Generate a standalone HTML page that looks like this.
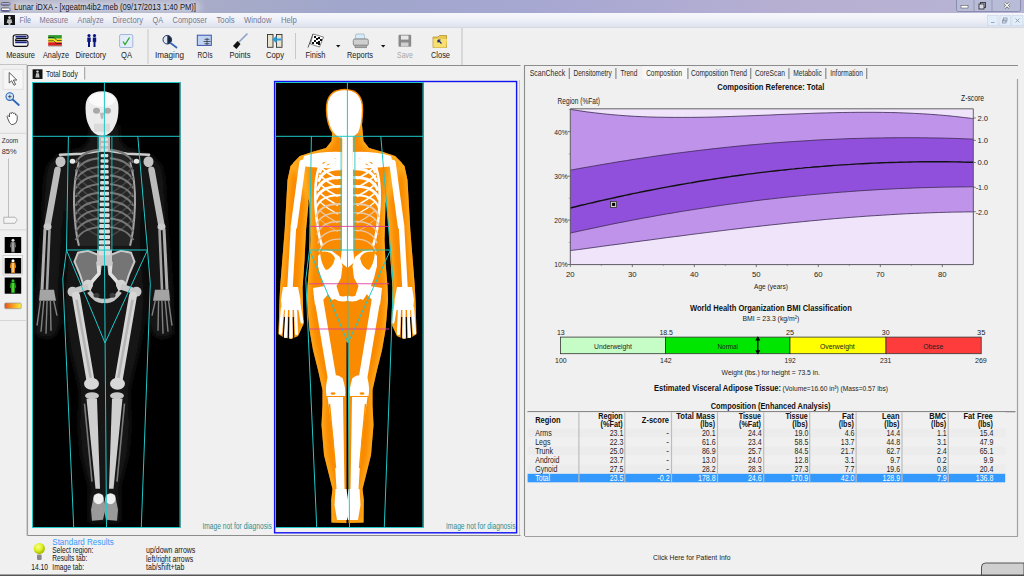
<!DOCTYPE html>
<html><head><meta charset="utf-8">
<style>
html,body{margin:0;padding:0;width:1024px;height:576px;overflow:hidden;background:#f0f0f0}
svg{display:block}
text{font-family:"Liberation Sans",sans-serif}
</style></head><body>
<svg width="1024" height="576" viewBox="0 0 1024 576">
<defs>
<linearGradient id="gTitle" x1="0" y1="0" x2="1" y2="0">
<stop offset="0" stop-color="#b0b2c4"/><stop offset="0.2" stop-color="#a8acc8"/><stop offset="0.35" stop-color="#a0a6cc"/><stop offset="0.55" stop-color="#a8a8d2"/><stop offset="0.8" stop-color="#b8b0d2"/><stop offset="1" stop-color="#b6b4d4"/>
</linearGradient>
<linearGradient id="gMenu" x1="0" y1="0" x2="0" y2="1">
<stop offset="0" stop-color="#f6f7fb"/><stop offset="0.5" stop-color="#eef0f8"/><stop offset="1" stop-color="#dde2ee"/>
</linearGradient>
</defs>
<rect x="0" y="0" width="1024" height="576" fill="#f0f0f0"/>
<rect x="0" y="0" width="1024" height="13" fill="url(#gTitle)"/>
<rect x="0" y="13" width="1024" height="14" fill="url(#gMenu)"/>
<rect x="0" y="27" width="1024" height="1" fill="#d6d9e2"/>
<rect x="4" y="15" width="11" height="10" fill="#111"/><circle cx="9.5" cy="17.6" r="1.3" fill="#ddd"/><path d="M7.5 19.3 H11.5 L12.3 23 L10.8 23 L10.3 25 H8.7 L8.2 23 L6.7 23 Z" fill="#bbb"/>
<rect x="1.3" y="2.5" width="8.7" height="2.8" rx="1.2" fill="#fff" stroke="#333" stroke-width="0.7"/><rect x="2" y="3.6" width="7.3" height="1" fill="#3a3a9a"/>
<rect x="1.3" y="8" width="8.7" height="3.3" rx="1.2" fill="#fff" stroke="#333" stroke-width="0.7"/><rect x="2" y="10.2" width="7.3" height="1" fill="#3a3a9a"/>
<rect x="956.5" y="-2" width="64" height="13.5" rx="2" fill="#b9bcd6" stroke="#7d82a6" stroke-width="0.8"/>
<line x1="974" y1="0" x2="974" y2="11" stroke="#8a8fb0" stroke-width="0.8"/>
<line x1="992" y1="0" x2="992" y2="11" stroke="#8a8fb0" stroke-width="0.8"/>
<rect x="961" y="5.5" width="7" height="2.5" fill="#fff" stroke="#444" stroke-width="0.5"/>
<rect x="980.5" y="2.5" width="5" height="5" fill="none" stroke="#333" stroke-width="0.9"/><rect x="979" y="4" width="5" height="5" fill="#d8dae8" stroke="#333" stroke-width="0.9"/>
<path d="M1004.5 3 L1009.5 7.8 M1009.5 3 L1004.5 7.8" stroke="#555" stroke-width="2.4"/><path d="M1004.5 3 L1009.5 7.8 M1009.5 3 L1004.5 7.8" stroke="#fff" stroke-width="1.2"/>
<g fill="#e2eefa" stroke="#c8d2e2" stroke-width="0.6">
<rect x="987.3" y="15.2" width="10.7" height="10.5"/><rect x="999.9" y="15.2" width="10.5" height="10.5"/><rect x="1012" y="15.2" width="10.9" height="10.5"/>
</g>
<g stroke="#8890a8" stroke-width="0.8" fill="none">
<line x1="991" y1="22.5" x2="994.5" y2="22.5"/><rect x="1003.5" y="18" width="3.5" height="3"/><rect x="1002.5" y="20" width="3.5" height="3"/><path d="M1015.5 18.5 L1019.5 22.5 M1019.5 18.5 L1015.5 22.5"/>
</g>
<rect x="0" y="64" width="27" height="1" fill="#c4c4c4"/>
<rect x="147.5" y="29" width="1" height="35" fill="#c8c8c8"/>
<rect x="295" y="33" width="1" height="26" fill="#c8c8c8"/>
<rect x="461.5" y="28" width="1" height="37" fill="#c0c0c0"/>

<defs><filter id="glow" x="-20%" y="-100%" width="140%" height="300%"><feGaussianBlur stdDeviation="3"/></filter></defs><rect x="12" y="2" width="188" height="10" fill="#e8e8f0" opacity="0.55" filter="url(#glow)"/>
<text x="14.0" y="9.9" font-size="8.6" fill="#151520" textLength="182.0" lengthAdjust="spacingAndGlyphs">Lunar iDXA - [xgeatm4ib2.meb (09/17/2013 1:40 PM)]</text>
<text x="19.5" y="23.0" font-size="8.2" fill="#767890" textLength="11.5" lengthAdjust="spacingAndGlyphs">File</text>
<text x="39.5" y="23.0" font-size="8.2" fill="#767890" textLength="28.7" lengthAdjust="spacingAndGlyphs">Measure</text>
<text x="77.5" y="23.0" font-size="8.2" fill="#767890" textLength="26.2" lengthAdjust="spacingAndGlyphs">Analyze</text>
<text x="112.5" y="23.0" font-size="8.2" fill="#767890" textLength="30.5" lengthAdjust="spacingAndGlyphs">Directory</text>
<text x="152.5" y="23.0" font-size="8.2" fill="#767890" textLength="10.5" lengthAdjust="spacingAndGlyphs">QA</text>
<text x="172.5" y="23.0" font-size="8.2" fill="#767890" textLength="34.5" lengthAdjust="spacingAndGlyphs">Composer</text>
<text x="216.5" y="23.0" font-size="8.2" fill="#767890" textLength="18.0" lengthAdjust="spacingAndGlyphs">Tools</text>
<text x="244.0" y="23.0" font-size="8.2" fill="#767890" textLength="27.5" lengthAdjust="spacingAndGlyphs">Window</text>
<text x="281.0" y="23.0" font-size="8.2" fill="#767890" textLength="15.8" lengthAdjust="spacingAndGlyphs">Help</text>
<text x="6.2" y="57.5" font-size="8.6" fill="#222" textLength="28.8" lengthAdjust="spacingAndGlyphs">Measure</text>
<text x="43.0" y="57.5" font-size="8.6" fill="#222" textLength="26.0" lengthAdjust="spacingAndGlyphs">Analyze</text>
<text x="75.5" y="57.5" font-size="8.6" fill="#222" textLength="30.5" lengthAdjust="spacingAndGlyphs">Directory</text>
<text x="121.0" y="57.5" font-size="8.6" fill="#222" textLength="11.0" lengthAdjust="spacingAndGlyphs">QA</text>
<text x="155.0" y="57.5" font-size="8.6" fill="#222" textLength="29.0" lengthAdjust="spacingAndGlyphs">Imaging</text>
<text x="197.5" y="57.5" font-size="8.6" fill="#222" textLength="15.0" lengthAdjust="spacingAndGlyphs">ROIs</text>
<text x="229.5" y="57.5" font-size="8.6" fill="#222" textLength="21.0" lengthAdjust="spacingAndGlyphs">Points</text>
<text x="266.0" y="57.5" font-size="8.6" fill="#222" textLength="18.0" lengthAdjust="spacingAndGlyphs">Copy</text>
<text x="305.5" y="57.5" font-size="8.6" fill="#222" textLength="20.0" lengthAdjust="spacingAndGlyphs">Finish</text>
<text x="347.0" y="57.5" font-size="8.6" fill="#222" textLength="26.0" lengthAdjust="spacingAndGlyphs">Reports</text>
<text x="431.0" y="57.5" font-size="8.6" fill="#222" textLength="19.0" lengthAdjust="spacingAndGlyphs">Close</text>
<text x="397.0" y="57.5" font-size="8.6" fill="#a8a8a8" textLength="16.0" lengthAdjust="spacingAndGlyphs">Save</text>
<path d="M524.5 536 V65.5 H1018" stroke="#8c8c8c" stroke-width="1.1" fill="none"/>
<path d="M1017.5 79 V536" stroke="#a0a0a0" stroke-width="1.2" fill="none"/>
<path d="M525 536.5 H1018" stroke="#a0a0a0" stroke-width="1" fill="none"/>
<rect x="642.5" y="66.5" width="45" height="12.5" fill="#f7f7f7"/>
<rect x="568.7" y="68" width="1.2" height="11" fill="#8a8a8a"/>
<rect x="615.3" y="68" width="1.2" height="11" fill="#8a8a8a"/>
<rect x="687.3" y="68" width="1.2" height="11" fill="#8a8a8a"/>
<rect x="750.1" y="68" width="1.2" height="11" fill="#8a8a8a"/>
<rect x="788.3" y="68" width="1.2" height="11" fill="#8a8a8a"/>
<rect x="825.2" y="68" width="1.2" height="11" fill="#8a8a8a"/>
<rect x="866.1" y="68" width="1.2" height="11" fill="#8a8a8a"/>
<text x="529.7" y="75.8" font-size="8.4" fill="#2a2a2a" textLength="35.6" lengthAdjust="spacingAndGlyphs">ScanCheck</text>
<text x="573.6" y="75.8" font-size="8.4" fill="#2a2a2a" textLength="38.1" lengthAdjust="spacingAndGlyphs">Densitometry</text>
<text x="620.5" y="75.8" font-size="8.4" fill="#2a2a2a" textLength="16.9" lengthAdjust="spacingAndGlyphs">Trend</text>
<text x="646.2" y="75.8" font-size="8.4" fill="#2a2a2a" textLength="35.8" lengthAdjust="spacingAndGlyphs">Composition</text>
<text x="690.9" y="75.8" font-size="8.4" fill="#2a2a2a" textLength="56.2" lengthAdjust="spacingAndGlyphs">Composition Trend</text>
<text x="755.0" y="75.8" font-size="8.4" fill="#2a2a2a" textLength="29.9" lengthAdjust="spacingAndGlyphs">CoreScan</text>
<text x="793.3" y="75.8" font-size="8.4" fill="#2a2a2a" textLength="28.5" lengthAdjust="spacingAndGlyphs">Metabolic</text>
<text x="830.2" y="75.8" font-size="8.4" fill="#2a2a2a" textLength="32.6" lengthAdjust="spacingAndGlyphs">Information</text>
<text x="717.2" y="90.2" font-size="8.2" fill="#111" font-weight="bold" textLength="107.2" lengthAdjust="spacingAndGlyphs">Composition Reference: Total</text>
<text x="557.6" y="103.7" font-size="8.2" fill="#222" textLength="42.4" lengthAdjust="spacingAndGlyphs">Region (%Fat)</text>
<text x="961.0" y="101.3" font-size="8.2" fill="#222" textLength="23.0" lengthAdjust="spacingAndGlyphs">Z-score</text>
<rect x="570.3" y="108.8" width="403.0" height="155.8" fill="#efe4f9"/>
<path d="M570.3 109.3 C571.6 109.6 575.6 110.2 578.3 110.6 C581.0 111.0 583.6 111.4 586.3 111.8 C589.0 112.2 591.6 112.5 594.3 112.8 C597.0 113.1 599.6 113.4 602.3 113.7 C605.0 114.0 607.6 114.3 610.3 114.5 C613.0 114.8 615.6 115.0 618.3 115.2 C621.0 115.4 623.6 115.6 626.3 115.8 C629.0 116.0 631.6 116.1 634.3 116.3 C637.0 116.4 639.6 116.5 642.3 116.7 C645.0 116.8 647.6 116.9 650.3 117.0 C653.0 117.1 655.6 117.1 658.3 117.2 C661.0 117.3 663.6 117.3 666.3 117.3 C669.0 117.4 671.6 117.4 674.3 117.4 C677.0 117.4 679.6 117.4 682.3 117.4 C685.0 117.4 687.6 117.4 690.3 117.4 C693.0 117.4 695.6 117.3 698.3 117.3 C701.0 117.3 703.6 117.2 706.3 117.2 C709.0 117.1 711.6 117.0 714.3 117.0 C717.0 116.9 719.6 116.8 722.3 116.8 C725.0 116.7 727.6 116.6 730.3 116.5 C733.0 116.4 735.6 116.3 738.3 116.2 C741.0 116.1 743.6 116.0 746.3 115.9 C749.0 115.8 751.6 115.7 754.3 115.6 C757.0 115.5 759.6 115.4 762.3 115.3 C765.0 115.2 767.6 115.1 770.3 115.0 C773.0 114.9 775.6 114.7 778.3 114.6 C781.0 114.5 783.6 114.4 786.3 114.3 C789.0 114.2 791.6 114.1 794.3 114.0 C797.0 113.9 799.6 113.8 802.3 113.7 C805.0 113.6 807.6 113.5 810.3 113.4 C813.0 113.3 815.6 113.2 818.3 113.1 C821.0 113.1 823.6 113.0 826.3 112.9 C829.0 112.8 831.6 112.8 834.3 112.7 C837.0 112.6 839.6 112.6 842.3 112.5 C845.0 112.5 847.6 112.4 850.3 112.4 C853.0 112.4 855.6 112.3 858.3 112.3 C861.0 112.3 863.6 112.3 866.3 112.3 C869.0 112.3 871.6 112.3 874.3 112.3 C877.0 112.3 879.6 112.3 882.3 112.4 C885.0 112.4 887.6 112.5 890.3 112.5 C893.0 112.6 895.6 112.6 898.3 112.7 C901.0 112.8 903.6 112.9 906.3 113.0 C909.0 113.1 911.6 113.2 914.3 113.4 C917.0 113.5 919.6 113.6 922.3 113.8 C925.0 113.9 927.6 114.1 930.3 114.3 C933.0 114.5 935.6 114.7 938.3 114.9 C941.0 115.1 943.6 115.3 946.3 115.6 C949.0 115.8 951.6 116.1 954.3 116.4 C957.0 116.6 959.6 116.9 962.3 117.3 C965.0 117.6 968.5 118.0 970.3 118.2 C972.1 118.5 972.8 118.6 973.3 118.6 L973.3 264.6 L570.3 264.6 Z" fill="#bf93e9"/>
<path d="M570.3 170.2 C571.6 170.0 575.6 169.2 578.3 168.7 C581.0 168.3 583.6 167.8 586.3 167.3 C589.0 166.8 591.6 166.3 594.3 165.9 C597.0 165.4 599.6 165.0 602.3 164.5 C605.0 164.0 607.6 163.6 610.3 163.2 C613.0 162.7 615.6 162.3 618.3 161.8 C621.0 161.4 623.6 161.0 626.3 160.6 C629.0 160.1 631.6 159.7 634.3 159.3 C637.0 158.9 639.6 158.5 642.3 158.1 C645.0 157.7 647.6 157.3 650.3 156.9 C653.0 156.5 655.6 156.1 658.3 155.7 C661.0 155.4 663.6 155.0 666.3 154.6 C669.0 154.3 671.6 153.9 674.3 153.5 C677.0 153.2 679.6 152.8 682.3 152.5 C685.0 152.2 687.6 151.8 690.3 151.5 C693.0 151.1 695.6 150.8 698.3 150.5 C701.0 150.2 703.6 149.9 706.3 149.6 C709.0 149.2 711.6 148.9 714.3 148.6 C717.0 148.3 719.6 148.0 722.3 147.8 C725.0 147.5 727.6 147.2 730.3 146.9 C733.0 146.6 735.6 146.4 738.3 146.1 C741.0 145.9 743.6 145.6 746.3 145.3 C749.0 145.1 751.6 144.8 754.3 144.6 C757.0 144.4 759.6 144.1 762.3 143.9 C765.0 143.7 767.6 143.5 770.3 143.2 C773.0 143.0 775.6 142.8 778.3 142.6 C781.0 142.4 783.6 142.2 786.3 142.0 C789.0 141.8 791.6 141.7 794.3 141.5 C797.0 141.3 799.6 141.1 802.3 141.0 C805.0 140.8 807.6 140.6 810.3 140.5 C813.0 140.3 815.6 140.2 818.3 140.0 C821.0 139.9 823.6 139.8 826.3 139.6 C829.0 139.5 831.6 139.4 834.3 139.3 C837.0 139.1 839.6 139.0 842.3 138.9 C845.0 138.8 847.6 138.7 850.3 138.6 C853.0 138.6 855.6 138.5 858.3 138.4 C861.0 138.3 863.6 138.2 866.3 138.2 C869.0 138.1 871.6 138.1 874.3 138.0 C877.0 137.9 879.6 137.9 882.3 137.9 C885.0 137.8 887.6 137.8 890.3 137.8 C893.0 137.7 895.6 137.7 898.3 137.7 C901.0 137.7 903.6 137.7 906.3 137.7 C909.0 137.7 911.6 137.7 914.3 137.7 C917.0 137.7 919.6 137.7 922.3 137.8 C925.0 137.8 927.6 137.8 930.3 137.9 C933.0 137.9 935.6 138.0 938.3 138.0 C941.0 138.1 943.6 138.1 946.3 138.2 C949.0 138.3 951.6 138.3 954.3 138.4 C957.0 138.5 959.6 138.6 962.3 138.7 C965.0 138.8 968.5 138.9 970.3 139.0 C972.1 139.1 972.8 139.1 973.3 139.1 L973.3 264.6 L570.3 264.6 Z" fill="#9150db"/>
<path d="M570.3 233.1 C571.6 232.8 575.6 231.9 578.3 231.3 C581.0 230.7 583.6 230.1 586.3 229.6 C589.0 229.0 591.6 228.4 594.3 227.9 C597.0 227.3 599.6 226.7 602.3 226.2 C605.0 225.6 607.6 225.1 610.3 224.5 C613.0 224.0 615.6 223.5 618.3 222.9 C621.0 222.4 623.6 221.9 626.3 221.4 C629.0 220.9 631.6 220.3 634.3 219.8 C637.0 219.3 639.6 218.8 642.3 218.3 C645.0 217.8 647.6 217.4 650.3 216.9 C653.0 216.4 655.6 215.9 658.3 215.4 C661.0 215.0 663.6 214.5 666.3 214.0 C669.0 213.6 671.6 213.1 674.3 212.7 C677.0 212.2 679.6 211.8 682.3 211.3 C685.0 210.9 687.6 210.5 690.3 210.1 C693.0 209.6 695.6 209.2 698.3 208.8 C701.0 208.4 703.6 208.0 706.3 207.6 C709.0 207.2 711.6 206.8 714.3 206.4 C717.0 206.0 719.6 205.6 722.3 205.2 C725.0 204.8 727.6 204.5 730.3 204.1 C733.0 203.7 735.6 203.4 738.3 203.0 C741.0 202.6 743.6 202.3 746.3 202.0 C749.0 201.6 751.6 201.3 754.3 200.9 C757.0 200.6 759.6 200.3 762.3 199.9 C765.0 199.6 767.6 199.3 770.3 199.0 C773.0 198.7 775.6 198.4 778.3 198.1 C781.0 197.8 783.6 197.5 786.3 197.2 C789.0 196.9 791.6 196.6 794.3 196.4 C797.0 196.1 799.6 195.8 802.3 195.6 C805.0 195.3 807.6 195.0 810.3 194.8 C813.0 194.5 815.6 194.3 818.3 194.1 C821.0 193.8 823.6 193.6 826.3 193.4 C829.0 193.1 831.6 192.9 834.3 192.7 C837.0 192.5 839.6 192.3 842.3 192.1 C845.0 191.9 847.6 191.7 850.3 191.5 C853.0 191.3 855.6 191.1 858.3 190.9 C861.0 190.7 863.6 190.5 866.3 190.4 C869.0 190.2 871.6 190.0 874.3 189.9 C877.0 189.7 879.6 189.6 882.3 189.4 C885.0 189.3 887.6 189.2 890.3 189.0 C893.0 188.9 895.6 188.8 898.3 188.6 C901.0 188.5 903.6 188.4 906.3 188.3 C909.0 188.2 911.6 188.1 914.3 188.0 C917.0 187.9 919.6 187.8 922.3 187.7 C925.0 187.6 927.6 187.6 930.3 187.5 C933.0 187.4 935.6 187.3 938.3 187.3 C941.0 187.2 943.6 187.2 946.3 187.1 C949.0 187.1 951.6 187.0 954.3 187.0 C957.0 187.0 959.6 186.9 962.3 186.9 C965.0 186.9 968.5 186.9 970.3 186.8 C972.1 186.8 972.8 186.8 973.3 186.8 L973.3 264.6 L570.3 264.6 Z" fill="#bf93e9"/>
<path d="M570.3 250.6 C571.6 250.4 575.6 249.9 578.3 249.6 C581.0 249.2 583.6 248.8 586.3 248.5 C589.0 248.1 591.6 247.8 594.3 247.4 C597.0 247.0 599.6 246.7 602.3 246.3 C605.0 246.0 607.6 245.6 610.3 245.2 C613.0 244.9 615.6 244.5 618.3 244.2 C621.0 243.8 623.6 243.4 626.3 243.1 C629.0 242.7 631.6 242.4 634.3 242.0 C637.0 241.7 639.6 241.3 642.3 240.9 C645.0 240.6 647.6 240.2 650.3 239.9 C653.0 239.5 655.6 239.2 658.3 238.8 C661.0 238.5 663.6 238.1 666.3 237.7 C669.0 237.4 671.6 237.0 674.3 236.7 C677.0 236.4 679.6 236.0 682.3 235.7 C685.0 235.3 687.6 235.0 690.3 234.6 C693.0 234.3 695.6 233.9 698.3 233.6 C701.0 233.3 703.6 232.9 706.3 232.6 C709.0 232.3 711.6 231.9 714.3 231.6 C717.0 231.3 719.6 230.9 722.3 230.6 C725.0 230.3 727.6 230.0 730.3 229.6 C733.0 229.3 735.6 229.0 738.3 228.7 C741.0 228.4 743.6 228.1 746.3 227.7 C749.0 227.4 751.6 227.1 754.3 226.8 C757.0 226.5 759.6 226.2 762.3 225.9 C765.0 225.6 767.6 225.3 770.3 225.0 C773.0 224.7 775.6 224.4 778.3 224.2 C781.0 223.9 783.6 223.6 786.3 223.3 C789.0 223.0 791.6 222.8 794.3 222.5 C797.0 222.2 799.6 222.0 802.3 221.7 C805.0 221.4 807.6 221.2 810.3 220.9 C813.0 220.7 815.6 220.4 818.3 220.2 C821.0 219.9 823.6 219.7 826.3 219.4 C829.0 219.2 831.6 219.0 834.3 218.7 C837.0 218.5 839.6 218.3 842.3 218.1 C845.0 217.8 847.6 217.6 850.3 217.4 C853.0 217.2 855.6 217.0 858.3 216.8 C861.0 216.6 863.6 216.4 866.3 216.2 C869.0 216.0 871.6 215.9 874.3 215.7 C877.0 215.5 879.6 215.3 882.3 215.2 C885.0 215.0 887.6 214.8 890.3 214.7 C893.0 214.5 895.6 214.4 898.3 214.2 C901.0 214.1 903.6 213.9 906.3 213.8 C909.0 213.7 911.6 213.5 914.3 213.4 C917.0 213.3 919.6 213.2 922.3 213.1 C925.0 213.0 927.6 212.9 930.3 212.8 C933.0 212.7 935.6 212.6 938.3 212.5 C941.0 212.4 943.6 212.4 946.3 212.3 C949.0 212.2 951.6 212.2 954.3 212.1 C957.0 212.1 959.6 212.0 962.3 212.0 C965.0 211.9 968.5 211.9 970.3 211.9 C972.1 211.9 972.8 211.9 973.3 211.9 L973.3 264.6 L570.3 264.6 Z" fill="#efe4f9"/>
<path d="M570.3 109.3 C571.6 109.6 575.6 110.2 578.3 110.6 C581.0 111.0 583.6 111.4 586.3 111.8 C589.0 112.2 591.6 112.5 594.3 112.8 C597.0 113.1 599.6 113.4 602.3 113.7 C605.0 114.0 607.6 114.3 610.3 114.5 C613.0 114.8 615.6 115.0 618.3 115.2 C621.0 115.4 623.6 115.6 626.3 115.8 C629.0 116.0 631.6 116.1 634.3 116.3 C637.0 116.4 639.6 116.5 642.3 116.7 C645.0 116.8 647.6 116.9 650.3 117.0 C653.0 117.1 655.6 117.1 658.3 117.2 C661.0 117.3 663.6 117.3 666.3 117.3 C669.0 117.4 671.6 117.4 674.3 117.4 C677.0 117.4 679.6 117.4 682.3 117.4 C685.0 117.4 687.6 117.4 690.3 117.4 C693.0 117.4 695.6 117.3 698.3 117.3 C701.0 117.3 703.6 117.2 706.3 117.2 C709.0 117.1 711.6 117.0 714.3 117.0 C717.0 116.9 719.6 116.8 722.3 116.8 C725.0 116.7 727.6 116.6 730.3 116.5 C733.0 116.4 735.6 116.3 738.3 116.2 C741.0 116.1 743.6 116.0 746.3 115.9 C749.0 115.8 751.6 115.7 754.3 115.6 C757.0 115.5 759.6 115.4 762.3 115.3 C765.0 115.2 767.6 115.1 770.3 115.0 C773.0 114.9 775.6 114.7 778.3 114.6 C781.0 114.5 783.6 114.4 786.3 114.3 C789.0 114.2 791.6 114.1 794.3 114.0 C797.0 113.9 799.6 113.8 802.3 113.7 C805.0 113.6 807.6 113.5 810.3 113.4 C813.0 113.3 815.6 113.2 818.3 113.1 C821.0 113.1 823.6 113.0 826.3 112.9 C829.0 112.8 831.6 112.8 834.3 112.7 C837.0 112.6 839.6 112.6 842.3 112.5 C845.0 112.5 847.6 112.4 850.3 112.4 C853.0 112.4 855.6 112.3 858.3 112.3 C861.0 112.3 863.6 112.3 866.3 112.3 C869.0 112.3 871.6 112.3 874.3 112.3 C877.0 112.3 879.6 112.3 882.3 112.4 C885.0 112.4 887.6 112.5 890.3 112.5 C893.0 112.6 895.6 112.6 898.3 112.7 C901.0 112.8 903.6 112.9 906.3 113.0 C909.0 113.1 911.6 113.2 914.3 113.4 C917.0 113.5 919.6 113.6 922.3 113.8 C925.0 113.9 927.6 114.1 930.3 114.3 C933.0 114.5 935.6 114.7 938.3 114.9 C941.0 115.1 943.6 115.3 946.3 115.6 C949.0 115.8 951.6 116.1 954.3 116.4 C957.0 116.6 959.6 116.9 962.3 117.3 C965.0 117.6 968.5 118.0 970.3 118.2 C972.1 118.5 972.8 118.6 973.3 118.6" fill="none" stroke="#3a2850" stroke-width="0.8"/>
<path d="M570.3 170.2 C571.6 170.0 575.6 169.2 578.3 168.7 C581.0 168.3 583.6 167.8 586.3 167.3 C589.0 166.8 591.6 166.3 594.3 165.9 C597.0 165.4 599.6 165.0 602.3 164.5 C605.0 164.0 607.6 163.6 610.3 163.2 C613.0 162.7 615.6 162.3 618.3 161.8 C621.0 161.4 623.6 161.0 626.3 160.6 C629.0 160.1 631.6 159.7 634.3 159.3 C637.0 158.9 639.6 158.5 642.3 158.1 C645.0 157.7 647.6 157.3 650.3 156.9 C653.0 156.5 655.6 156.1 658.3 155.7 C661.0 155.4 663.6 155.0 666.3 154.6 C669.0 154.3 671.6 153.9 674.3 153.5 C677.0 153.2 679.6 152.8 682.3 152.5 C685.0 152.2 687.6 151.8 690.3 151.5 C693.0 151.1 695.6 150.8 698.3 150.5 C701.0 150.2 703.6 149.9 706.3 149.6 C709.0 149.2 711.6 148.9 714.3 148.6 C717.0 148.3 719.6 148.0 722.3 147.8 C725.0 147.5 727.6 147.2 730.3 146.9 C733.0 146.6 735.6 146.4 738.3 146.1 C741.0 145.9 743.6 145.6 746.3 145.3 C749.0 145.1 751.6 144.8 754.3 144.6 C757.0 144.4 759.6 144.1 762.3 143.9 C765.0 143.7 767.6 143.5 770.3 143.2 C773.0 143.0 775.6 142.8 778.3 142.6 C781.0 142.4 783.6 142.2 786.3 142.0 C789.0 141.8 791.6 141.7 794.3 141.5 C797.0 141.3 799.6 141.1 802.3 141.0 C805.0 140.8 807.6 140.6 810.3 140.5 C813.0 140.3 815.6 140.2 818.3 140.0 C821.0 139.9 823.6 139.8 826.3 139.6 C829.0 139.5 831.6 139.4 834.3 139.3 C837.0 139.1 839.6 139.0 842.3 138.9 C845.0 138.8 847.6 138.7 850.3 138.6 C853.0 138.6 855.6 138.5 858.3 138.4 C861.0 138.3 863.6 138.2 866.3 138.2 C869.0 138.1 871.6 138.1 874.3 138.0 C877.0 137.9 879.6 137.9 882.3 137.9 C885.0 137.8 887.6 137.8 890.3 137.8 C893.0 137.7 895.6 137.7 898.3 137.7 C901.0 137.7 903.6 137.7 906.3 137.7 C909.0 137.7 911.6 137.7 914.3 137.7 C917.0 137.7 919.6 137.7 922.3 137.8 C925.0 137.8 927.6 137.8 930.3 137.9 C933.0 137.9 935.6 138.0 938.3 138.0 C941.0 138.1 943.6 138.1 946.3 138.2 C949.0 138.3 951.6 138.3 954.3 138.4 C957.0 138.5 959.6 138.6 962.3 138.7 C965.0 138.8 968.5 138.9 970.3 139.0 C972.1 139.1 972.8 139.1 973.3 139.1" fill="none" stroke="#3a2850" stroke-width="0.8"/>
<path d="M570.3 233.1 C571.6 232.8 575.6 231.9 578.3 231.3 C581.0 230.7 583.6 230.1 586.3 229.6 C589.0 229.0 591.6 228.4 594.3 227.9 C597.0 227.3 599.6 226.7 602.3 226.2 C605.0 225.6 607.6 225.1 610.3 224.5 C613.0 224.0 615.6 223.5 618.3 222.9 C621.0 222.4 623.6 221.9 626.3 221.4 C629.0 220.9 631.6 220.3 634.3 219.8 C637.0 219.3 639.6 218.8 642.3 218.3 C645.0 217.8 647.6 217.4 650.3 216.9 C653.0 216.4 655.6 215.9 658.3 215.4 C661.0 215.0 663.6 214.5 666.3 214.0 C669.0 213.6 671.6 213.1 674.3 212.7 C677.0 212.2 679.6 211.8 682.3 211.3 C685.0 210.9 687.6 210.5 690.3 210.1 C693.0 209.6 695.6 209.2 698.3 208.8 C701.0 208.4 703.6 208.0 706.3 207.6 C709.0 207.2 711.6 206.8 714.3 206.4 C717.0 206.0 719.6 205.6 722.3 205.2 C725.0 204.8 727.6 204.5 730.3 204.1 C733.0 203.7 735.6 203.4 738.3 203.0 C741.0 202.6 743.6 202.3 746.3 202.0 C749.0 201.6 751.6 201.3 754.3 200.9 C757.0 200.6 759.6 200.3 762.3 199.9 C765.0 199.6 767.6 199.3 770.3 199.0 C773.0 198.7 775.6 198.4 778.3 198.1 C781.0 197.8 783.6 197.5 786.3 197.2 C789.0 196.9 791.6 196.6 794.3 196.4 C797.0 196.1 799.6 195.8 802.3 195.6 C805.0 195.3 807.6 195.0 810.3 194.8 C813.0 194.5 815.6 194.3 818.3 194.1 C821.0 193.8 823.6 193.6 826.3 193.4 C829.0 193.1 831.6 192.9 834.3 192.7 C837.0 192.5 839.6 192.3 842.3 192.1 C845.0 191.9 847.6 191.7 850.3 191.5 C853.0 191.3 855.6 191.1 858.3 190.9 C861.0 190.7 863.6 190.5 866.3 190.4 C869.0 190.2 871.6 190.0 874.3 189.9 C877.0 189.7 879.6 189.6 882.3 189.4 C885.0 189.3 887.6 189.2 890.3 189.0 C893.0 188.9 895.6 188.8 898.3 188.6 C901.0 188.5 903.6 188.4 906.3 188.3 C909.0 188.2 911.6 188.1 914.3 188.0 C917.0 187.9 919.6 187.8 922.3 187.7 C925.0 187.6 927.6 187.6 930.3 187.5 C933.0 187.4 935.6 187.3 938.3 187.3 C941.0 187.2 943.6 187.2 946.3 187.1 C949.0 187.1 951.6 187.0 954.3 187.0 C957.0 187.0 959.6 186.9 962.3 186.9 C965.0 186.9 968.5 186.9 970.3 186.8 C972.1 186.8 972.8 186.8 973.3 186.8" fill="none" stroke="#3a2850" stroke-width="0.8"/>
<path d="M570.3 250.6 C571.6 250.4 575.6 249.9 578.3 249.6 C581.0 249.2 583.6 248.8 586.3 248.5 C589.0 248.1 591.6 247.8 594.3 247.4 C597.0 247.0 599.6 246.7 602.3 246.3 C605.0 246.0 607.6 245.6 610.3 245.2 C613.0 244.9 615.6 244.5 618.3 244.2 C621.0 243.8 623.6 243.4 626.3 243.1 C629.0 242.7 631.6 242.4 634.3 242.0 C637.0 241.7 639.6 241.3 642.3 240.9 C645.0 240.6 647.6 240.2 650.3 239.9 C653.0 239.5 655.6 239.2 658.3 238.8 C661.0 238.5 663.6 238.1 666.3 237.7 C669.0 237.4 671.6 237.0 674.3 236.7 C677.0 236.4 679.6 236.0 682.3 235.7 C685.0 235.3 687.6 235.0 690.3 234.6 C693.0 234.3 695.6 233.9 698.3 233.6 C701.0 233.3 703.6 232.9 706.3 232.6 C709.0 232.3 711.6 231.9 714.3 231.6 C717.0 231.3 719.6 230.9 722.3 230.6 C725.0 230.3 727.6 230.0 730.3 229.6 C733.0 229.3 735.6 229.0 738.3 228.7 C741.0 228.4 743.6 228.1 746.3 227.7 C749.0 227.4 751.6 227.1 754.3 226.8 C757.0 226.5 759.6 226.2 762.3 225.9 C765.0 225.6 767.6 225.3 770.3 225.0 C773.0 224.7 775.6 224.4 778.3 224.2 C781.0 223.9 783.6 223.6 786.3 223.3 C789.0 223.0 791.6 222.8 794.3 222.5 C797.0 222.2 799.6 222.0 802.3 221.7 C805.0 221.4 807.6 221.2 810.3 220.9 C813.0 220.7 815.6 220.4 818.3 220.2 C821.0 219.9 823.6 219.7 826.3 219.4 C829.0 219.2 831.6 219.0 834.3 218.7 C837.0 218.5 839.6 218.3 842.3 218.1 C845.0 217.8 847.6 217.6 850.3 217.4 C853.0 217.2 855.6 217.0 858.3 216.8 C861.0 216.6 863.6 216.4 866.3 216.2 C869.0 216.0 871.6 215.9 874.3 215.7 C877.0 215.5 879.6 215.3 882.3 215.2 C885.0 215.0 887.6 214.8 890.3 214.7 C893.0 214.5 895.6 214.4 898.3 214.2 C901.0 214.1 903.6 213.9 906.3 213.8 C909.0 213.7 911.6 213.5 914.3 213.4 C917.0 213.3 919.6 213.2 922.3 213.1 C925.0 213.0 927.6 212.9 930.3 212.8 C933.0 212.7 935.6 212.6 938.3 212.5 C941.0 212.4 943.6 212.4 946.3 212.3 C949.0 212.2 951.6 212.2 954.3 212.1 C957.0 212.1 959.6 212.0 962.3 212.0 C965.0 211.9 968.5 211.9 970.3 211.9 C972.1 211.9 972.8 211.9 973.3 211.9" fill="none" stroke="#3a2850" stroke-width="0.8"/>
<path d="M570.3 208.0 C571.6 207.7 575.6 206.7 578.3 206.0 C581.0 205.4 583.6 204.7 586.3 204.1 C589.0 203.5 591.6 202.8 594.3 202.2 C597.0 201.6 599.6 201.0 602.3 200.4 C605.0 199.8 607.6 199.2 610.3 198.6 C613.0 198.0 615.6 197.4 618.3 196.8 C621.0 196.2 623.6 195.7 626.3 195.1 C629.0 194.5 631.6 194.0 634.3 193.4 C637.0 192.9 639.6 192.3 642.3 191.8 C645.0 191.2 647.6 190.7 650.3 190.2 C653.0 189.7 655.6 189.2 658.3 188.6 C661.0 188.1 663.6 187.6 666.3 187.1 C669.0 186.6 671.6 186.2 674.3 185.7 C677.0 185.2 679.6 184.7 682.3 184.3 C685.0 183.8 687.6 183.3 690.3 182.9 C693.0 182.4 695.6 182.0 698.3 181.5 C701.0 181.1 703.6 180.7 706.3 180.2 C709.0 179.8 711.6 179.4 714.3 179.0 C717.0 178.6 719.6 178.2 722.3 177.8 C725.0 177.4 727.6 177.0 730.3 176.6 C733.0 176.2 735.6 175.9 738.3 175.5 C741.0 175.1 743.6 174.8 746.3 174.4 C749.0 174.1 751.6 173.7 754.3 173.4 C757.0 173.0 759.6 172.7 762.3 172.4 C765.0 172.1 767.6 171.8 770.3 171.4 C773.0 171.1 775.6 170.8 778.3 170.5 C781.0 170.2 783.6 170.0 786.3 169.7 C789.0 169.4 791.6 169.1 794.3 168.9 C797.0 168.6 799.6 168.3 802.3 168.1 C805.0 167.8 807.6 167.6 810.3 167.4 C813.0 167.1 815.6 166.9 818.3 166.7 C821.0 166.5 823.6 166.2 826.3 166.0 C829.0 165.8 831.6 165.6 834.3 165.4 C837.0 165.2 839.6 165.1 842.3 164.9 C845.0 164.7 847.6 164.5 850.3 164.4 C853.0 164.2 855.6 164.1 858.3 163.9 C861.0 163.8 863.6 163.6 866.3 163.5 C869.0 163.4 871.6 163.2 874.3 163.1 C877.0 163.0 879.6 162.9 882.3 162.8 C885.0 162.7 887.6 162.6 890.3 162.5 C893.0 162.4 895.6 162.3 898.3 162.3 C901.0 162.2 903.6 162.1 906.3 162.1 C909.0 162.0 911.6 162.0 914.3 161.9 C917.0 161.9 919.6 161.9 922.3 161.8 C925.0 161.8 927.6 161.8 930.3 161.8 C933.0 161.8 935.6 161.8 938.3 161.8 C941.0 161.8 943.6 161.8 946.3 161.8 C949.0 161.8 951.6 161.8 954.3 161.9 C957.0 161.9 959.6 161.9 962.3 162.0 C965.0 162.0 968.5 162.1 970.3 162.2 C972.1 162.2 972.8 162.2 973.3 162.2" fill="none" stroke="#111" stroke-width="1.4"/>
<rect x="610.6" y="201.4" width="6" height="6" fill="#ccc" stroke="#333" stroke-width="0.8"/><rect x="612.1" y="202.9" width="3" height="3" fill="#000"/>
<path d="M570.3 108.8 V264.6 H973.3 V108.8 Z" fill="none" stroke="#555" stroke-width="0.9"/>
<text x="567.7" y="134.5" font-size="8" fill="#222" text-anchor="end" textLength="13.4" lengthAdjust="spacingAndGlyphs">40%</text>
<line x1="567.8" y1="131.6" x2="570.3" y2="131.6" stroke="#555" stroke-width="0.8"/>
<text x="567.7" y="179.1" font-size="8" fill="#222" text-anchor="end" textLength="13.4" lengthAdjust="spacingAndGlyphs">30%</text>
<line x1="567.8" y1="176.2" x2="570.3" y2="176.2" stroke="#555" stroke-width="0.8"/>
<text x="567.7" y="223.0" font-size="8" fill="#222" text-anchor="end" textLength="13.4" lengthAdjust="spacingAndGlyphs">20%</text>
<line x1="567.8" y1="220.1" x2="570.3" y2="220.1" stroke="#555" stroke-width="0.8"/>
<text x="567.7" y="267.4" font-size="8" fill="#222" text-anchor="end" textLength="13.4" lengthAdjust="spacingAndGlyphs">10%</text>
<line x1="567.8" y1="264.5" x2="570.3" y2="264.5" stroke="#555" stroke-width="0.8"/>
<line x1="568.8" y1="109.5" x2="570.3" y2="109.5" stroke="#777" stroke-width="0.6"/>
<line x1="568.8" y1="153.9" x2="570.3" y2="153.9" stroke="#777" stroke-width="0.6"/>
<line x1="568.8" y1="198.2" x2="570.3" y2="198.2" stroke="#777" stroke-width="0.6"/>
<line x1="568.8" y1="242.4" x2="570.3" y2="242.4" stroke="#777" stroke-width="0.6"/>
<text x="570.3" y="277.3" font-size="8" fill="#222" text-anchor="middle" textLength="8.6" lengthAdjust="spacingAndGlyphs">20</text>
<line x1="570.3" y1="264.6" x2="570.3" y2="267.1" stroke="#555" stroke-width="0.8"/>
<text x="632.3" y="277.3" font-size="8" fill="#222" text-anchor="middle" textLength="8.6" lengthAdjust="spacingAndGlyphs">30</text>
<line x1="632.3" y1="264.6" x2="632.3" y2="267.1" stroke="#555" stroke-width="0.8"/>
<text x="694.3" y="277.3" font-size="8" fill="#222" text-anchor="middle" textLength="8.6" lengthAdjust="spacingAndGlyphs">40</text>
<line x1="694.3" y1="264.6" x2="694.3" y2="267.1" stroke="#555" stroke-width="0.8"/>
<text x="756.3" y="277.3" font-size="8" fill="#222" text-anchor="middle" textLength="8.6" lengthAdjust="spacingAndGlyphs">50</text>
<line x1="756.3" y1="264.6" x2="756.3" y2="267.1" stroke="#555" stroke-width="0.8"/>
<text x="818.3" y="277.3" font-size="8" fill="#222" text-anchor="middle" textLength="8.6" lengthAdjust="spacingAndGlyphs">60</text>
<line x1="818.3" y1="264.6" x2="818.3" y2="267.1" stroke="#555" stroke-width="0.8"/>
<text x="880.3" y="277.3" font-size="8" fill="#222" text-anchor="middle" textLength="8.6" lengthAdjust="spacingAndGlyphs">70</text>
<line x1="880.3" y1="264.6" x2="880.3" y2="267.1" stroke="#555" stroke-width="0.8"/>
<text x="942.3" y="277.3" font-size="8" fill="#222" text-anchor="middle" textLength="8.6" lengthAdjust="spacingAndGlyphs">80</text>
<line x1="942.3" y1="264.6" x2="942.3" y2="267.1" stroke="#555" stroke-width="0.8"/>
<line x1="601.3" y1="264.6" x2="601.3" y2="266.1" stroke="#777" stroke-width="0.6"/>
<line x1="663.3" y1="264.6" x2="663.3" y2="266.1" stroke="#777" stroke-width="0.6"/>
<line x1="725.3" y1="264.6" x2="725.3" y2="266.1" stroke="#777" stroke-width="0.6"/>
<line x1="787.3" y1="264.6" x2="787.3" y2="266.1" stroke="#777" stroke-width="0.6"/>
<line x1="849.3" y1="264.6" x2="849.3" y2="266.1" stroke="#777" stroke-width="0.6"/>
<line x1="911.3" y1="264.6" x2="911.3" y2="266.1" stroke="#777" stroke-width="0.6"/>
<text x="754.0" y="289.0" font-size="8" fill="#222" textLength="34.0" lengthAdjust="spacingAndGlyphs">Age (years)</text>
<line x1="973.3" y1="118" x2="975.8" y2="118" stroke="#555" stroke-width="0.8"/>
<text x="988.0" y="120.9" font-size="8" fill="#222" text-anchor="end" textLength="10.6" lengthAdjust="spacingAndGlyphs">2.0</text>
<line x1="973.3" y1="140.4" x2="975.8" y2="140.4" stroke="#555" stroke-width="0.8"/>
<text x="988.0" y="143.3" font-size="8" fill="#222" text-anchor="end" textLength="10.6" lengthAdjust="spacingAndGlyphs">1.0</text>
<line x1="973.3" y1="162.5" x2="975.8" y2="162.5" stroke="#555" stroke-width="0.8"/>
<text x="988.0" y="165.4" font-size="8" fill="#222" text-anchor="end" textLength="10.6" lengthAdjust="spacingAndGlyphs">0.0</text>
<line x1="973.3" y1="187.3" x2="975.8" y2="187.3" stroke="#555" stroke-width="0.8"/>
<text x="988.0" y="190.2" font-size="8" fill="#222" text-anchor="end" textLength="12.3" lengthAdjust="spacingAndGlyphs">-1.0</text>
<line x1="973.3" y1="211.7" x2="975.8" y2="211.7" stroke="#555" stroke-width="0.8"/>
<text x="988.0" y="214.6" font-size="8" fill="#222" text-anchor="end" textLength="12.3" lengthAdjust="spacingAndGlyphs">-2.0</text>
<text x="689.9" y="311.0" font-size="8.2" fill="#111" font-weight="bold" textLength="161.9" lengthAdjust="spacingAndGlyphs">World Health Organization BMI Classification</text>
<text x="742.4" y="321.2" font-size="8" fill="#222" textLength="56.9" lengthAdjust="spacingAndGlyphs">BMI = 23.3 (kg/m²)</text>
<rect x="560.5" y="337.1" width="105.0" height="16.599999999999966" fill="#c6fcc6" stroke="#333" stroke-width="0.8"/>
<rect x="665.5" y="337.1" width="124.5" height="16.599999999999966" fill="#00e600" stroke="#333" stroke-width="0.8"/>
<rect x="790" y="337.1" width="96" height="16.599999999999966" fill="#ffff00" stroke="#333" stroke-width="0.8"/>
<rect x="886" y="337.1" width="95.20000000000005" height="16.599999999999966" fill="#ff3c3c" stroke="#333" stroke-width="0.8"/>
<text x="594.0" y="348.8" font-size="8" fill="#222" textLength="38.0" lengthAdjust="spacingAndGlyphs">Underweight</text>
<text x="717.5" y="348.8" font-size="8" fill="#222" textLength="20.5" lengthAdjust="spacingAndGlyphs">Normal</text>
<text x="820.0" y="348.8" font-size="8" fill="#222" textLength="34.7" lengthAdjust="spacingAndGlyphs">Overweight</text>
<text x="923.3" y="348.8" font-size="8" fill="#222" textLength="20.0" lengthAdjust="spacingAndGlyphs">Obese</text>
<text x="556.9" y="334.6" font-size="8" fill="#222" textLength="7.8" lengthAdjust="spacingAndGlyphs">13</text>
<text x="659.4" y="334.6" font-size="8" fill="#222" textLength="13.4" lengthAdjust="spacingAndGlyphs">18.5</text>
<text x="785.9" y="334.6" font-size="8" fill="#222" textLength="8.0" lengthAdjust="spacingAndGlyphs">25</text>
<text x="881.8" y="334.6" font-size="8" fill="#222" textLength="7.8" lengthAdjust="spacingAndGlyphs">30</text>
<text x="977.0" y="334.6" font-size="8" fill="#222" textLength="8.3" lengthAdjust="spacingAndGlyphs">35</text>
<text x="555.1" y="363.4" font-size="8" fill="#222" textLength="11.5" lengthAdjust="spacingAndGlyphs">100</text>
<text x="660.1" y="363.4" font-size="8" fill="#222" textLength="11.5" lengthAdjust="spacingAndGlyphs">142</text>
<text x="784.6" y="363.4" font-size="8" fill="#222" textLength="11.0" lengthAdjust="spacingAndGlyphs">192</text>
<text x="879.9" y="363.4" font-size="8" fill="#222" textLength="11.4" lengthAdjust="spacingAndGlyphs">231</text>
<text x="975.0" y="363.4" font-size="8" fill="#222" textLength="11.8" lengthAdjust="spacingAndGlyphs">269</text>
<path d="M757.8 337 V354" stroke="#000" stroke-width="1.3"/><path d="M755.2 340.5 L757.8 336.2 L760.4 340.5 Z M755.2 350.3 L757.8 354.6 L760.4 350.3 Z" fill="#000"/>
<text x="721.6" y="375.4" font-size="8" fill="#222" textLength="98.4" lengthAdjust="spacingAndGlyphs">Weight (lbs.) for height = 73.5 in.</text>
<text x="654.0" y="391.3" font-size="8.2" fill="#111" font-weight="bold" textLength="127.0" lengthAdjust="spacingAndGlyphs">Estimated Visceral Adipose Tissue:</text>
<text x="782.5" y="391.3" font-size="8" fill="#222" textLength="105.5" lengthAdjust="spacingAndGlyphs">(Volume=16.60 in³) (Mass=0.57 lbs)</text>
<text x="710.7" y="409.1" font-size="8.2" fill="#111" font-weight="bold" textLength="119.8" lengthAdjust="spacingAndGlyphs">Composition (Enhanced Analysis)</text>
<rect x="527.5" y="411" width="488" height="1.3" fill="#888"/>
<rect x="527.6" y="412.3" width="478" height="16" fill="#f0f0f0"/>
<rect x="527.6" y="428.5" width="478" height="9" fill="#ececec"/>
<rect x="527.6" y="437.5" width="478" height="9" fill="#f0f0f0"/>
<rect x="527.6" y="446.5" width="478" height="9" fill="#ececec"/>
<rect x="527.6" y="455.5" width="478" height="9" fill="#f0f0f0"/>
<rect x="527.6" y="464.5" width="478" height="9" fill="#ececec"/>
<rect x="527.6" y="473.8" width="477.6" height="8.5" fill="#3399ff"/>
<rect x="578.3" y="412.3" width="1.2" height="70" fill="#bdbdbd"/>
<rect x="624.1999999999999" y="412.3" width="1.2" height="70" fill="#bdbdbd"/>
<rect x="670.9" y="412.3" width="1.2" height="70" fill="#bdbdbd"/>
<rect x="716.9" y="412.3" width="1.2" height="70" fill="#bdbdbd"/>
<rect x="763.1" y="412.3" width="1.2" height="70" fill="#bdbdbd"/>
<rect x="809.1" y="412.3" width="1.2" height="70" fill="#bdbdbd"/>
<rect x="855.5" y="412.3" width="1.2" height="70" fill="#bdbdbd"/>
<rect x="901.4" y="412.3" width="1.2" height="70" fill="#bdbdbd"/>
<rect x="947.6" y="412.3" width="1.2" height="70" fill="#bdbdbd"/>
<text x="535.2" y="422.8" font-size="8.2" fill="#111" font-weight="bold" textLength="25.4" lengthAdjust="spacingAndGlyphs">Region</text>
<text x="622.8" y="418.9" font-size="8.2" fill="#111" text-anchor="end" font-weight="bold" textLength="24.6" lengthAdjust="spacingAndGlyphs">Region</text>
<text x="622.8" y="427.3" font-size="8.2" fill="#111" text-anchor="end" font-weight="bold" textLength="22.3" lengthAdjust="spacingAndGlyphs">(%Fat)</text>
<text x="669.0" y="422.8" font-size="8.2" fill="#111" text-anchor="end" font-weight="bold" textLength="27.2" lengthAdjust="spacingAndGlyphs">Z-score</text>
<text x="715.0" y="418.9" font-size="8.2" fill="#111" text-anchor="end" font-weight="bold" textLength="38.8" lengthAdjust="spacingAndGlyphs">Total Mass</text>
<text x="715.0" y="427.3" font-size="8.2" fill="#111" text-anchor="end" font-weight="bold" textLength="14.7" lengthAdjust="spacingAndGlyphs">(lbs)</text>
<text x="761.0" y="418.9" font-size="8.2" fill="#111" text-anchor="end" font-weight="bold" textLength="22.3" lengthAdjust="spacingAndGlyphs">Tissue</text>
<text x="761.0" y="427.3" font-size="8.2" fill="#111" text-anchor="end" font-weight="bold" textLength="22.0" lengthAdjust="spacingAndGlyphs">(%Fat)</text>
<text x="807.7" y="418.9" font-size="8.2" fill="#111" text-anchor="end" font-weight="bold" textLength="22.3" lengthAdjust="spacingAndGlyphs">Tissue</text>
<text x="807.7" y="427.3" font-size="8.2" fill="#111" text-anchor="end" font-weight="bold" textLength="15.4" lengthAdjust="spacingAndGlyphs">(lbs)</text>
<text x="853.9" y="418.9" font-size="8.2" fill="#111" text-anchor="end" font-weight="bold" textLength="12.0" lengthAdjust="spacingAndGlyphs">Fat</text>
<text x="853.9" y="427.3" font-size="8.2" fill="#111" text-anchor="end" font-weight="bold" textLength="15.2" lengthAdjust="spacingAndGlyphs">(lbs)</text>
<text x="899.5" y="418.9" font-size="8.2" fill="#111" text-anchor="end" font-weight="bold" textLength="17.4" lengthAdjust="spacingAndGlyphs">Lean</text>
<text x="899.5" y="427.3" font-size="8.2" fill="#111" text-anchor="end" font-weight="bold" textLength="15.2" lengthAdjust="spacingAndGlyphs">(lbs)</text>
<text x="946.2" y="418.9" font-size="8.2" fill="#111" text-anchor="end" font-weight="bold" textLength="16.9" lengthAdjust="spacingAndGlyphs">BMC</text>
<text x="946.2" y="427.3" font-size="8.2" fill="#111" text-anchor="end" font-weight="bold" textLength="15.2" lengthAdjust="spacingAndGlyphs">(lbs)</text>
<text x="992.8" y="418.9" font-size="8.2" fill="#111" text-anchor="end" font-weight="bold" textLength="29.3" lengthAdjust="spacingAndGlyphs">Fat Free</text>
<text x="992.8" y="427.3" font-size="8.2" fill="#111" text-anchor="end" font-weight="bold" textLength="14.9" lengthAdjust="spacingAndGlyphs">(lbs)</text>
<text x="535.2" y="436.0" font-size="8.2" fill="#1e1e1e" textLength="16.5" lengthAdjust="spacingAndGlyphs">Arms</text>
<text x="623.4" y="436.0" font-size="8.2" fill="#1e1e1e" text-anchor="end" textLength="13.7" lengthAdjust="spacingAndGlyphs">23.1</text>
<text x="669.0" y="436.0" font-size="8.2" fill="#1e1e1e" text-anchor="end">-</text>
<text x="715.6" y="436.0" font-size="8.2" fill="#1e1e1e" text-anchor="end" textLength="13.7" lengthAdjust="spacingAndGlyphs">20.1</text>
<text x="761.6" y="436.0" font-size="8.2" fill="#1e1e1e" text-anchor="end" textLength="13.7" lengthAdjust="spacingAndGlyphs">24.4</text>
<text x="808.3" y="436.0" font-size="8.2" fill="#1e1e1e" text-anchor="end" textLength="13.7" lengthAdjust="spacingAndGlyphs">19.0</text>
<text x="854.5" y="436.0" font-size="8.2" fill="#1e1e1e" text-anchor="end" textLength="9.8" lengthAdjust="spacingAndGlyphs">4.6</text>
<text x="900.1" y="436.0" font-size="8.2" fill="#1e1e1e" text-anchor="end" textLength="13.7" lengthAdjust="spacingAndGlyphs">14.4</text>
<text x="946.8" y="436.0" font-size="8.2" fill="#1e1e1e" text-anchor="end" textLength="9.8" lengthAdjust="spacingAndGlyphs">1.1</text>
<text x="993.4" y="436.0" font-size="8.2" fill="#1e1e1e" text-anchor="end" textLength="13.7" lengthAdjust="spacingAndGlyphs">15.4</text>
<text x="535.2" y="445.0" font-size="8.2" fill="#1e1e1e" textLength="15.3" lengthAdjust="spacingAndGlyphs">Legs</text>
<text x="623.4" y="445.0" font-size="8.2" fill="#1e1e1e" text-anchor="end" textLength="13.7" lengthAdjust="spacingAndGlyphs">22.3</text>
<text x="669.0" y="445.0" font-size="8.2" fill="#1e1e1e" text-anchor="end">-</text>
<text x="715.6" y="445.0" font-size="8.2" fill="#1e1e1e" text-anchor="end" textLength="13.7" lengthAdjust="spacingAndGlyphs">61.6</text>
<text x="761.6" y="445.0" font-size="8.2" fill="#1e1e1e" text-anchor="end" textLength="13.7" lengthAdjust="spacingAndGlyphs">23.4</text>
<text x="808.3" y="445.0" font-size="8.2" fill="#1e1e1e" text-anchor="end" textLength="13.7" lengthAdjust="spacingAndGlyphs">58.5</text>
<text x="854.5" y="445.0" font-size="8.2" fill="#1e1e1e" text-anchor="end" textLength="13.7" lengthAdjust="spacingAndGlyphs">13.7</text>
<text x="900.1" y="445.0" font-size="8.2" fill="#1e1e1e" text-anchor="end" textLength="13.7" lengthAdjust="spacingAndGlyphs">44.8</text>
<text x="946.8" y="445.0" font-size="8.2" fill="#1e1e1e" text-anchor="end" textLength="9.8" lengthAdjust="spacingAndGlyphs">3.1</text>
<text x="993.4" y="445.0" font-size="8.2" fill="#1e1e1e" text-anchor="end" textLength="13.7" lengthAdjust="spacingAndGlyphs">47.9</text>
<text x="535.2" y="454.0" font-size="8.2" fill="#1e1e1e" textLength="17.8" lengthAdjust="spacingAndGlyphs">Trunk</text>
<text x="623.4" y="454.0" font-size="8.2" fill="#1e1e1e" text-anchor="end" textLength="13.7" lengthAdjust="spacingAndGlyphs">25.0</text>
<text x="669.0" y="454.0" font-size="8.2" fill="#1e1e1e" text-anchor="end">-</text>
<text x="715.6" y="454.0" font-size="8.2" fill="#1e1e1e" text-anchor="end" textLength="13.7" lengthAdjust="spacingAndGlyphs">86.9</text>
<text x="761.6" y="454.0" font-size="8.2" fill="#1e1e1e" text-anchor="end" textLength="13.7" lengthAdjust="spacingAndGlyphs">25.7</text>
<text x="808.3" y="454.0" font-size="8.2" fill="#1e1e1e" text-anchor="end" textLength="13.7" lengthAdjust="spacingAndGlyphs">84.5</text>
<text x="854.5" y="454.0" font-size="8.2" fill="#1e1e1e" text-anchor="end" textLength="13.7" lengthAdjust="spacingAndGlyphs">21.7</text>
<text x="900.1" y="454.0" font-size="8.2" fill="#1e1e1e" text-anchor="end" textLength="13.7" lengthAdjust="spacingAndGlyphs">62.7</text>
<text x="946.8" y="454.0" font-size="8.2" fill="#1e1e1e" text-anchor="end" textLength="9.8" lengthAdjust="spacingAndGlyphs">2.4</text>
<text x="993.4" y="454.0" font-size="8.2" fill="#1e1e1e" text-anchor="end" textLength="13.7" lengthAdjust="spacingAndGlyphs">65.1</text>
<text x="535.2" y="463.1" font-size="8.2" fill="#1e1e1e" textLength="24.3" lengthAdjust="spacingAndGlyphs">Android</text>
<text x="623.4" y="463.1" font-size="8.2" fill="#1e1e1e" text-anchor="end" textLength="13.7" lengthAdjust="spacingAndGlyphs">23.7</text>
<text x="669.0" y="463.1" font-size="8.2" fill="#1e1e1e" text-anchor="end">-</text>
<text x="715.6" y="463.1" font-size="8.2" fill="#1e1e1e" text-anchor="end" textLength="13.7" lengthAdjust="spacingAndGlyphs">13.0</text>
<text x="761.6" y="463.1" font-size="8.2" fill="#1e1e1e" text-anchor="end" textLength="13.7" lengthAdjust="spacingAndGlyphs">24.0</text>
<text x="808.3" y="463.1" font-size="8.2" fill="#1e1e1e" text-anchor="end" textLength="13.7" lengthAdjust="spacingAndGlyphs">12.8</text>
<text x="854.5" y="463.1" font-size="8.2" fill="#1e1e1e" text-anchor="end" textLength="9.8" lengthAdjust="spacingAndGlyphs">3.1</text>
<text x="900.1" y="463.1" font-size="8.2" fill="#1e1e1e" text-anchor="end" textLength="9.8" lengthAdjust="spacingAndGlyphs">9.7</text>
<text x="946.8" y="463.1" font-size="8.2" fill="#1e1e1e" text-anchor="end" textLength="9.8" lengthAdjust="spacingAndGlyphs">0.2</text>
<text x="993.4" y="463.1" font-size="8.2" fill="#1e1e1e" text-anchor="end" textLength="9.8" lengthAdjust="spacingAndGlyphs">9.9</text>
<text x="535.2" y="472.1" font-size="8.2" fill="#1e1e1e" textLength="22.3" lengthAdjust="spacingAndGlyphs">Gynoid</text>
<text x="623.4" y="472.1" font-size="8.2" fill="#1e1e1e" text-anchor="end" textLength="13.7" lengthAdjust="spacingAndGlyphs">27.5</text>
<text x="669.0" y="472.1" font-size="8.2" fill="#1e1e1e" text-anchor="end">-</text>
<text x="715.6" y="472.1" font-size="8.2" fill="#1e1e1e" text-anchor="end" textLength="13.7" lengthAdjust="spacingAndGlyphs">28.2</text>
<text x="761.6" y="472.1" font-size="8.2" fill="#1e1e1e" text-anchor="end" textLength="13.7" lengthAdjust="spacingAndGlyphs">28.3</text>
<text x="808.3" y="472.1" font-size="8.2" fill="#1e1e1e" text-anchor="end" textLength="13.7" lengthAdjust="spacingAndGlyphs">27.3</text>
<text x="854.5" y="472.1" font-size="8.2" fill="#1e1e1e" text-anchor="end" textLength="9.8" lengthAdjust="spacingAndGlyphs">7.7</text>
<text x="900.1" y="472.1" font-size="8.2" fill="#1e1e1e" text-anchor="end" textLength="13.7" lengthAdjust="spacingAndGlyphs">19.6</text>
<text x="946.8" y="472.1" font-size="8.2" fill="#1e1e1e" text-anchor="end" textLength="9.8" lengthAdjust="spacingAndGlyphs">0.8</text>
<text x="993.4" y="472.1" font-size="8.2" fill="#1e1e1e" text-anchor="end" textLength="13.7" lengthAdjust="spacingAndGlyphs">20.4</text>
<text x="535.2" y="481.1" font-size="8.2" fill="#fff" textLength="14.9" lengthAdjust="spacingAndGlyphs">Total</text>
<text x="623.4" y="481.1" font-size="8.2" fill="#fff" text-anchor="end" textLength="13.7" lengthAdjust="spacingAndGlyphs">23.5</text>
<text x="669.6" y="481.1" font-size="8.2" fill="#fff" text-anchor="end" textLength="12.2" lengthAdjust="spacingAndGlyphs">-0.2</text>
<text x="715.6" y="481.1" font-size="8.2" fill="#fff" text-anchor="end" textLength="17.6" lengthAdjust="spacingAndGlyphs">178.8</text>
<text x="761.6" y="481.1" font-size="8.2" fill="#fff" text-anchor="end" textLength="13.7" lengthAdjust="spacingAndGlyphs">24.6</text>
<text x="808.3" y="481.1" font-size="8.2" fill="#fff" text-anchor="end" textLength="17.6" lengthAdjust="spacingAndGlyphs">170.9</text>
<text x="854.5" y="481.1" font-size="8.2" fill="#fff" text-anchor="end" textLength="13.7" lengthAdjust="spacingAndGlyphs">42.0</text>
<text x="900.1" y="481.1" font-size="8.2" fill="#fff" text-anchor="end" textLength="17.6" lengthAdjust="spacingAndGlyphs">128.9</text>
<text x="946.8" y="481.1" font-size="8.2" fill="#fff" text-anchor="end" textLength="9.8" lengthAdjust="spacingAndGlyphs">7.9</text>
<text x="993.4" y="481.1" font-size="8.2" fill="#fff" text-anchor="end" textLength="17.6" lengthAdjust="spacingAndGlyphs">136.8</text>
<text x="653.0" y="560.0" font-size="7.8" fill="#222" textLength="77.5" lengthAdjust="spacingAndGlyphs">Click Here for Patient Info</text>
<path d="M27.5 535.5 V65.5 H520.5" stroke="#8c8c8c" stroke-width="1.1" fill="none"/>
<path d="M27.5 535.5 H520.5" stroke="#8c8c8c" stroke-width="1.1" fill="none"/><path d="M519.5 80 V535" stroke="#c8c8c8" stroke-width="1" fill="none"/>
<defs><filter id="bl" x="-10%" y="-10%" width="120%" height="120%"><feGaussianBlur stdDeviation="0.65"/></filter><filter id="bl3" x="-10%" y="-10%" width="120%" height="120%"><feGaussianBlur stdDeviation="2.5"/></filter><filter id="bl2" x="-10%" y="-10%" width="120%" height="120%"><feGaussianBlur stdDeviation="0.35"/></filter><clipPath id="clipX"><rect x="32.5" y="82" width="148" height="445.5"/></clipPath><clipPath id="clipC"><rect x="276" y="83" width="147" height="444"/></clipPath></defs>
<rect x="32.5" y="82" width="148" height="445.5" fill="#000"/>
<g clip-path="url(#clipX)"><g transform="translate(-243,-0.3)">
<g filter="url(#bl3)"><path d="M333.0 125.0 L331.5 141.0 L326.0 148.0 L312.0 152.0 L300.0 156.0 L293.0 163.0 L300.0 175.0 L309.5 203.0 L310.5 240.0 L309.5 262.0 L307.5 286.0 L307.0 300.0 L309.5 330.0 L313.0 350.0 L318.0 370.0 L322.5 390.0 L322.5 405.0 L321.5 425.0 L324.0 455.0 L332.5 489.0 L331.2 500.0 L331.5 522.5 L347.5 523.0 L363.5 522.5 L363.8 500.0 L362.5 489.0 L371.0 455.0 L373.5 425.0 L372.5 405.0 L372.5 390.0 L377.0 370.0 L382.0 350.0 L385.5 330.0 L388.0 300.0 L387.5 286.0 L385.5 262.0 L384.5 240.0 L385.5 203.0 L395.0 175.0 L402.0 163.0 L395.0 156.0 L383.0 152.0 L369.0 148.0 L363.5 141.0 L362.0 125.0 Z" fill="#161616"/><path d="M300.0 156.0 L304.0 162.0 L306.0 185.0 L308.5 203.0 L306.0 230.0 L304.5 260.0 L302.5 288.0 L303.5 324.0 L298.0 336.0 L291.0 339.0 L283.0 337.0 L278.5 334.0 L279.5 300.0 L280.2 286.0 L284.7 230.0 L287.5 180.0 L290.5 166.0 Z" fill="#161616"/><path d="M395.0 156.0 L391.0 162.0 L389.0 185.0 L386.5 203.0 L389.0 230.0 L390.5 260.0 L392.5 288.0 L391.5 324.0 L397.0 336.0 L404.0 339.0 L412.0 337.0 L416.5 334.0 L415.5 300.0 L414.8 286.0 L410.3 230.0 L407.5 180.0 L404.5 166.0 Z" fill="#161616"/></g>
<path d="M347.5 342 V523" stroke="#000" stroke-width="2" filter="url(#bl)"/>
<g filter="url(#bl)">
<path d="M328.5 108 Q328.5 92 345 91.5 Q361.5 92 361.5 108 Q361.5 120 358 126 Q354 136 345 136 Q336 136 332 126 Q328.5 120 328.5 108 Z" fill="#ececec"/>
<ellipse cx="345" cy="100" rx="13" ry="7" fill="#fafafa"/>
<ellipse cx="339.5" cy="111" rx="3.5" ry="3" fill="#a8a8a8"/><ellipse cx="350.5" cy="111" rx="3.5" ry="3" fill="#a8a8a8"/><path d="M343 113 L347 113 L346 119 L344 119 Z" fill="#b8b8b8"/><path d="M337 124 H353 V132 H337 Z" fill="#dadada"/>
<path d="M345 150 Q322 152 318 172 Q315 205 320 246 L375 246 Q380 205 377 172 Q373 152 350 150 Z" fill="#262626"/>
<path d="M343.0 151 L325.0 154 L303.0 155" stroke="#cdcdcd" stroke-width="2.6" fill="none" stroke-linecap="round"/>
<ellipse cx="315.5" cy="161.5" rx="2.8" ry="2.5" fill="#e8e8e8"/>
<path d="M322.0 162 Q316.5 180 317.0 205 Q318.0 232 322.0 246" stroke="#a4a4a4" stroke-width="2" fill="none"/>
<path d="M342.0 150.0 Q326.0 151.0 318.5 163.0" stroke="#767676" stroke-width="1.9" fill="none"/>
<path d="M319.0 159.0 Q330.0 170.0 341.0 176.0" stroke="#484848" stroke-width="1.4" fill="none"/>
<path d="M342.0 158.6 Q326.0 159.6 318.5 171.6" stroke="#767676" stroke-width="1.9" fill="none"/>
<path d="M319.0 167.6 Q330.0 178.6 341.0 184.6" stroke="#484848" stroke-width="1.4" fill="none"/>
<path d="M342.0 167.2 Q326.0 168.2 318.5 180.2" stroke="#767676" stroke-width="1.9" fill="none"/>
<path d="M319.0 176.2 Q330.0 187.2 341.0 193.2" stroke="#484848" stroke-width="1.4" fill="none"/>
<path d="M342.0 175.8 Q326.0 176.8 318.5 188.8" stroke="#767676" stroke-width="1.9" fill="none"/>
<path d="M319.0 184.8 Q330.0 195.8 341.0 201.8" stroke="#484848" stroke-width="1.4" fill="none"/>
<path d="M342.0 184.4 Q326.0 185.4 318.5 197.4" stroke="#767676" stroke-width="1.9" fill="none"/>
<path d="M319.0 193.4 Q330.0 204.4 341.0 210.4" stroke="#484848" stroke-width="1.4" fill="none"/>
<path d="M342.0 193.0 Q326.0 194.0 318.5 206.0" stroke="#767676" stroke-width="1.9" fill="none"/>
<path d="M319.0 202.0 Q330.0 213.0 341.0 219.0" stroke="#484848" stroke-width="1.4" fill="none"/>
<path d="M342.0 201.6 Q326.0 202.6 318.5 214.6" stroke="#767676" stroke-width="1.9" fill="none"/>
<path d="M319.0 210.6 Q330.0 221.6 341.0 227.6" stroke="#484848" stroke-width="1.4" fill="none"/>
<path d="M342.0 210.2 Q326.0 211.2 318.5 223.2" stroke="#767676" stroke-width="1.9" fill="none"/>
<path d="M319.0 219.2 Q330.0 230.2 341.0 236.2" stroke="#484848" stroke-width="1.4" fill="none"/>
<path d="M342.0 218.8 Q326.0 219.8 318.5 231.8" stroke="#767676" stroke-width="1.9" fill="none"/>
<path d="M342.0 227.39999999999998 Q326.0 228.39999999999998 318.5 240.39999999999998" stroke="#767676" stroke-width="1.9" fill="none"/>
<path d="M300.5 170 L290.5 226" stroke="#bcbcbc" stroke-width="6.5" fill="none" stroke-linecap="round"/><ellipse cx="303.5" cy="162" rx="5" ry="5.5" fill="#c4c4c4"/>
<ellipse cx="290.5" cy="227" rx="4" ry="3.5" fill="#cacaca"/>
<path d="M288.0 229 L285.0 290" stroke="#b0b0b0" stroke-width="3" fill="none"/>
<path d="M292.5 230 L290.0 290" stroke="#a4a4a4" stroke-width="2.6" fill="none"/>
<path d="M283.0 290 L297.0 290 L299.0 301 L282.0 301 Z" fill="#a4a4a4"/>
<path d="M283.5 301 L280.0 326" stroke="#808080" stroke-width="1.4" fill="none"/>
<path d="M286.8 301 L284.0 332" stroke="#808080" stroke-width="1.4" fill="none"/>
<path d="M290.1 301 L289.0 334" stroke="#808080" stroke-width="1.4" fill="none"/>
<path d="M293.4 301 L294.0 331" stroke="#808080" stroke-width="1.4" fill="none"/>
<path d="M296.7 301 L300.0 316" stroke="#808080" stroke-width="1.4" fill="none"/>
<path d="M317.5 262 L321.0 253 L331.0 251 L341.0 255 L344.0 262 L343.0 272 L336.0 280 L333.0 290 L327.0 287 L323.0 275 Z" fill="#747474" stroke="#c8c8c8" stroke-width="2"/>
<path d="M341.0 262 L342.0 274 L335.0 282 L332.0 290" stroke="#e0e0e0" stroke-width="3.5" fill="none"/>
<path d="M332.0 292 Q340.0 303 347.5 301" stroke="#c4c4c4" stroke-width="4.5" fill="none"/>
<ellipse cx="339.5" cy="295.5" rx="3" ry="2.5" fill="#3a3a3a"/>
<ellipse cx="331.0" cy="285" rx="5" ry="5" fill="#d4d4d4"/>
<path d="M331.0 287 L316.0 292" stroke="#c8c8c8" stroke-width="6" fill="none"/>
<ellipse cx="315.5" cy="292" rx="5" ry="5" fill="#c8c8c8"/>
<path d="M319.0 296 L334.0 384" stroke="#d6d6d6" stroke-width="8" fill="none" stroke-linecap="round"/>
<path d="M319.5 300 L334.0 380" stroke="#b4b4b4" stroke-width="2.5" fill="none"/>
<ellipse cx="334.5" cy="384" rx="7.5" ry="6" fill="#d8d8d8"/><ellipse cx="335.0" cy="396" rx="7" ry="3.5" fill="#c8c8c8"/>
<path d="M329.5 399 L340.0 399 L343.0 489 L338.5 489 Z" fill="#cfcfcf"/>
<path d="M327.5 404 L335.0 482" stroke="#7a7a7a" stroke-width="1.6" fill="none"/>
<path d="M337.0 495 L346.0 495 L348.5 508 L346.0 520 L335.0 521 L334.0 510 Z" fill="#9a9a9a"/>
<ellipse cx="341.5" cy="499" rx="5" ry="5.5" fill="#f0f0f0"/>
<path d="M352.0 151 L370.0 154 L392.0 155" stroke="#cdcdcd" stroke-width="2.6" fill="none" stroke-linecap="round"/>
<ellipse cx="379.5" cy="161.5" rx="2.8" ry="2.5" fill="#e8e8e8"/>
<path d="M373.0 162 Q378.5 180 378.0 205 Q377.0 232 373.0 246" stroke="#a4a4a4" stroke-width="2" fill="none"/>
<path d="M353.0 150.0 Q369.0 151.0 376.5 163.0" stroke="#767676" stroke-width="1.9" fill="none"/>
<path d="M376.0 159.0 Q365.0 170.0 354.0 176.0" stroke="#484848" stroke-width="1.4" fill="none"/>
<path d="M353.0 158.6 Q369.0 159.6 376.5 171.6" stroke="#767676" stroke-width="1.9" fill="none"/>
<path d="M376.0 167.6 Q365.0 178.6 354.0 184.6" stroke="#484848" stroke-width="1.4" fill="none"/>
<path d="M353.0 167.2 Q369.0 168.2 376.5 180.2" stroke="#767676" stroke-width="1.9" fill="none"/>
<path d="M376.0 176.2 Q365.0 187.2 354.0 193.2" stroke="#484848" stroke-width="1.4" fill="none"/>
<path d="M353.0 175.8 Q369.0 176.8 376.5 188.8" stroke="#767676" stroke-width="1.9" fill="none"/>
<path d="M376.0 184.8 Q365.0 195.8 354.0 201.8" stroke="#484848" stroke-width="1.4" fill="none"/>
<path d="M353.0 184.4 Q369.0 185.4 376.5 197.4" stroke="#767676" stroke-width="1.9" fill="none"/>
<path d="M376.0 193.4 Q365.0 204.4 354.0 210.4" stroke="#484848" stroke-width="1.4" fill="none"/>
<path d="M353.0 193.0 Q369.0 194.0 376.5 206.0" stroke="#767676" stroke-width="1.9" fill="none"/>
<path d="M376.0 202.0 Q365.0 213.0 354.0 219.0" stroke="#484848" stroke-width="1.4" fill="none"/>
<path d="M353.0 201.6 Q369.0 202.6 376.5 214.6" stroke="#767676" stroke-width="1.9" fill="none"/>
<path d="M376.0 210.6 Q365.0 221.6 354.0 227.6" stroke="#484848" stroke-width="1.4" fill="none"/>
<path d="M353.0 210.2 Q369.0 211.2 376.5 223.2" stroke="#767676" stroke-width="1.9" fill="none"/>
<path d="M376.0 219.2 Q365.0 230.2 354.0 236.2" stroke="#484848" stroke-width="1.4" fill="none"/>
<path d="M353.0 218.8 Q369.0 219.8 376.5 231.8" stroke="#767676" stroke-width="1.9" fill="none"/>
<path d="M353.0 227.39999999999998 Q369.0 228.39999999999998 376.5 240.39999999999998" stroke="#767676" stroke-width="1.9" fill="none"/>
<path d="M394.5 170 L404.5 226" stroke="#bcbcbc" stroke-width="6.5" fill="none" stroke-linecap="round"/><ellipse cx="391.5" cy="162" rx="5" ry="5.5" fill="#c4c4c4"/>
<ellipse cx="404.5" cy="227" rx="4" ry="3.5" fill="#cacaca"/>
<path d="M407.0 229 L410.0 290" stroke="#b0b0b0" stroke-width="3" fill="none"/>
<path d="M402.5 230 L405.0 290" stroke="#a4a4a4" stroke-width="2.6" fill="none"/>
<path d="M412.0 290 L398.0 290 L396.0 301 L413.0 301 Z" fill="#a4a4a4"/>
<path d="M411.5 301 L415.0 326" stroke="#808080" stroke-width="1.4" fill="none"/>
<path d="M408.2 301 L411.0 332" stroke="#808080" stroke-width="1.4" fill="none"/>
<path d="M404.9 301 L406.0 334" stroke="#808080" stroke-width="1.4" fill="none"/>
<path d="M401.6 301 L401.0 331" stroke="#808080" stroke-width="1.4" fill="none"/>
<path d="M398.3 301 L395.0 316" stroke="#808080" stroke-width="1.4" fill="none"/>
<path d="M377.5 262 L374.0 253 L364.0 251 L354.0 255 L351.0 262 L352.0 272 L359.0 280 L362.0 290 L368.0 287 L372.0 275 Z" fill="#747474" stroke="#c8c8c8" stroke-width="2"/>
<path d="M354.0 262 L353.0 274 L360.0 282 L363.0 290" stroke="#e0e0e0" stroke-width="3.5" fill="none"/>
<path d="M363.0 292 Q355.0 303 347.5 301" stroke="#c4c4c4" stroke-width="4.5" fill="none"/>
<ellipse cx="355.5" cy="295.5" rx="3" ry="2.5" fill="#3a3a3a"/>
<ellipse cx="364.0" cy="285" rx="5" ry="5" fill="#d4d4d4"/>
<path d="M364.0 287 L379.0 292" stroke="#c8c8c8" stroke-width="6" fill="none"/>
<ellipse cx="379.5" cy="292" rx="5" ry="5" fill="#c8c8c8"/>
<path d="M376.0 296 L361.0 384" stroke="#d6d6d6" stroke-width="8" fill="none" stroke-linecap="round"/>
<path d="M375.5 300 L361.0 380" stroke="#b4b4b4" stroke-width="2.5" fill="none"/>
<ellipse cx="360.5" cy="384" rx="7.5" ry="6" fill="#d8d8d8"/><ellipse cx="360.0" cy="396" rx="7" ry="3.5" fill="#c8c8c8"/>
<path d="M365.5 399 L355.0 399 L352.0 489 L356.5 489 Z" fill="#cfcfcf"/>
<path d="M367.5 404 L360.0 482" stroke="#7a7a7a" stroke-width="1.6" fill="none"/>
<path d="M358.0 495 L349.0 495 L346.5 508 L349.0 520 L360.0 521 L361.0 510 Z" fill="#9a9a9a"/>
<ellipse cx="353.5" cy="499" rx="5" ry="5.5" fill="#f0f0f0"/>
<path d="M342 136 H353 V152 H342 Z" fill="#b8b8b8"/>
<rect x="340" y="250" width="15" height="16" fill="#c8c8c8"/>
<rect x="344.00" y="138.0" width="7.00" height="3.20" rx="1" fill="#dcdcdc"/>
<rect x="343.89" y="143.4" width="7.22" height="3.25" rx="1" fill="#dcdcdc"/>
<rect x="343.78" y="148.8" width="7.44" height="3.30" rx="1" fill="#dcdcdc"/>
<rect x="343.67" y="154.2" width="7.66" height="3.35" rx="1" fill="#dcdcdc"/>
<rect x="343.56" y="159.6" width="7.88" height="3.40" rx="1" fill="#dcdcdc"/>
<rect x="343.45" y="165.0" width="8.10" height="3.45" rx="1" fill="#dcdcdc"/>
<rect x="343.34" y="170.4" width="8.32" height="3.50" rx="1" fill="#dcdcdc"/>
<rect x="343.23" y="175.8" width="8.54" height="3.55" rx="1" fill="#dcdcdc"/>
<rect x="343.12" y="181.2" width="8.76" height="3.60" rx="1" fill="#dcdcdc"/>
<rect x="343.01" y="186.6" width="8.98" height="3.65" rx="1" fill="#dcdcdc"/>
<rect x="342.90" y="192.0" width="9.20" height="3.70" rx="1" fill="#dcdcdc"/>
<rect x="342.79" y="197.4" width="9.42" height="3.75" rx="1" fill="#dcdcdc"/>
<rect x="342.68" y="202.8" width="9.64" height="3.80" rx="1" fill="#dcdcdc"/>
<rect x="342.57" y="208.2" width="9.86" height="3.85" rx="1" fill="#dcdcdc"/>
<rect x="342.46" y="213.6" width="10.08" height="3.90" rx="1" fill="#dcdcdc"/>
<rect x="342.35" y="219.0" width="10.30" height="3.95" rx="1" fill="#dcdcdc"/>
<rect x="342.24" y="224.4" width="10.52" height="4.00" rx="1" fill="#dcdcdc"/>
<rect x="342.13" y="229.8" width="10.74" height="4.05" rx="1" fill="#dcdcdc"/>
<rect x="342.02" y="235.2" width="10.96" height="4.10" rx="1" fill="#dcdcdc"/>
<rect x="341.91" y="240.6" width="11.18" height="4.15" rx="1" fill="#dcdcdc"/>
<rect x="341.80" y="246.0" width="11.40" height="4.20" rx="1" fill="#dcdcdc"/>
<rect x="341.69" y="251.4" width="11.62" height="4.25" rx="1" fill="#dcdcdc"/>
</g></g></g>
<rect x="32.5" y="82.5" width="147.5" height="445" fill="none" stroke="#20c8c8" stroke-width="1"/>
<path d="M32.5 136.3 H180" stroke="#20c8c8" stroke-width="1"/>
<path d="M104.4 82.5 V250 M104.4 250 L106.5 527" stroke="#20c8c8" stroke-width="1"/>
<path d="M98.1 136.3 V250 M111.9 136.3 V250" stroke="#20c8c8" stroke-width="0.9"/>
<path d="M68.4 136.3 L66.5 250 L62.8 279 L73.7 527" stroke="#20c8c8" stroke-width="1" fill="none"/>
<path d="M137.8 136.3 L147.5 250 L150.3 283.7 L141.3 527" stroke="#20c8c8" stroke-width="1" fill="none"/>
<path d="M66.5 250 H147.5" stroke="#20c8c8" stroke-width="1"/>
<path d="M66.5 250 L105 343 L147.5 250" stroke="#20c8c8" stroke-width="1" fill="none"/>
<rect x="274.6" y="81.5" width="242" height="451.3" fill="none" stroke="#1010f0" stroke-width="1.4"/>
<rect x="275.6" y="82.5" width="148" height="445" fill="#000"/>
<g clip-path="url(#clipC)"><defs><clipPath id="silc"><path d="M333.0 125.0 L331.5 141.0 L326.0 148.0 L312.0 152.0 L300.0 156.0 L293.0 163.0 L300.0 175.0 L309.5 203.0 L310.5 240.0 L309.5 262.0 L307.5 286.0 L307.0 300.0 L309.5 330.0 L313.0 350.0 L318.0 370.0 L322.5 390.0 L322.5 405.0 L321.5 425.0 L324.0 455.0 L332.5 489.0 L331.2 500.0 L331.5 522.5 L347.5 523.0 L363.5 522.5 L363.8 500.0 L362.5 489.0 L371.0 455.0 L373.5 425.0 L372.5 405.0 L372.5 390.0 L377.0 370.0 L382.0 350.0 L385.5 330.0 L388.0 300.0 L387.5 286.0 L385.5 262.0 L384.5 240.0 L385.5 203.0 L395.0 175.0 L402.0 163.0 L395.0 156.0 L383.0 152.0 L369.0 148.0 L363.5 141.0 L362.0 125.0 Z" /><path d="M300.0 156.0 L304.0 162.0 L306.0 185.0 L308.5 203.0 L306.0 230.0 L304.5 260.0 L302.5 288.0 L303.5 324.0 L298.0 336.0 L291.0 339.0 L283.0 337.0 L278.5 334.0 L279.5 300.0 L280.2 286.0 L284.7 230.0 L287.5 180.0 L290.5 166.0 Z" /><path d="M395.0 156.0 L391.0 162.0 L389.0 185.0 L386.5 203.0 L389.0 230.0 L390.5 260.0 L392.5 288.0 L391.5 324.0 L397.0 336.0 L404.0 339.0 L412.0 337.0 L416.5 334.0 L415.5 300.0 L414.8 286.0 L410.3 230.0 L407.5 180.0 L404.5 166.0 Z" /><path d="M325.8 110 Q325.4 89 344.5 88.8 Q363.6 89 363.3 110 Q363 125 359.5 133.5 Q353 140 345.5 140 Q338 140 332.5 133.5 Q326.2 125 325.8 110 Z"/></clipPath></defs>
<g fill="#fa8a00"><path d="M333.0 125.0 L331.5 141.0 L326.0 148.0 L312.0 152.0 L300.0 156.0 L293.0 163.0 L300.0 175.0 L309.5 203.0 L310.5 240.0 L309.5 262.0 L307.5 286.0 L307.0 300.0 L309.5 330.0 L313.0 350.0 L318.0 370.0 L322.5 390.0 L322.5 405.0 L321.5 425.0 L324.0 455.0 L332.5 489.0 L331.2 500.0 L331.5 522.5 L347.5 523.0 L363.5 522.5 L363.8 500.0 L362.5 489.0 L371.0 455.0 L373.5 425.0 L372.5 405.0 L372.5 390.0 L377.0 370.0 L382.0 350.0 L385.5 330.0 L388.0 300.0 L387.5 286.0 L385.5 262.0 L384.5 240.0 L385.5 203.0 L395.0 175.0 L402.0 163.0 L395.0 156.0 L383.0 152.0 L369.0 148.0 L363.5 141.0 L362.0 125.0 Z" /><path d="M300.0 156.0 L304.0 162.0 L306.0 185.0 L308.5 203.0 L306.0 230.0 L304.5 260.0 L302.5 288.0 L303.5 324.0 L298.0 336.0 L291.0 339.0 L283.0 337.0 L278.5 334.0 L279.5 300.0 L280.2 286.0 L284.7 230.0 L287.5 180.0 L290.5 166.0 Z" /><path d="M395.0 156.0 L391.0 162.0 L389.0 185.0 L386.5 203.0 L389.0 230.0 L390.5 260.0 L392.5 288.0 L391.5 324.0 L397.0 336.0 L404.0 339.0 L412.0 337.0 L416.5 334.0 L415.5 300.0 L414.8 286.0 L410.3 230.0 L407.5 180.0 L404.5 166.0 Z" /><path d="M325.8 110 Q325.4 89 344.5 88.8 Q363.6 89 363.3 110 Q363 125 359.5 133.5 Q353 140 345.5 140 Q338 140 332.5 133.5 Q326.2 125 325.8 110 Z"/></g>
<g clip-path="url(#silc)"><g filter="url(#bl3)"><path d="M333.0 125.0 L331.5 141.0 L326.0 148.0 L312.0 152.0 L300.0 156.0 L293.0 163.0 L300.0 175.0 L309.5 203.0 L310.5 240.0 L309.5 262.0 L307.5 286.0 L307.0 300.0 L309.5 330.0 L313.0 350.0 L318.0 370.0 L322.5 390.0 L322.5 405.0 L321.5 425.0 L324.0 455.0 L332.5 489.0 L331.2 500.0 L331.5 522.5 L347.5 523.0 L363.5 522.5 L363.8 500.0 L362.5 489.0 L371.0 455.0 L373.5 425.0 L372.5 405.0 L372.5 390.0 L377.0 370.0 L382.0 350.0 L385.5 330.0 L388.0 300.0 L387.5 286.0 L385.5 262.0 L384.5 240.0 L385.5 203.0 L395.0 175.0 L402.0 163.0 L395.0 156.0 L383.0 152.0 L369.0 148.0 L363.5 141.0 L362.0 125.0 Z" fill="none" stroke="#ffb020" stroke-width="5"/><path d="M300.0 156.0 L304.0 162.0 L306.0 185.0 L308.5 203.0 L306.0 230.0 L304.5 260.0 L302.5 288.0 L303.5 324.0 L298.0 336.0 L291.0 339.0 L283.0 337.0 L278.5 334.0 L279.5 300.0 L280.2 286.0 L284.7 230.0 L287.5 180.0 L290.5 166.0 Z" fill="none" stroke="#ffb020" stroke-width="5"/><path d="M395.0 156.0 L391.0 162.0 L389.0 185.0 L386.5 203.0 L389.0 230.0 L390.5 260.0 L392.5 288.0 L391.5 324.0 L397.0 336.0 L404.0 339.0 L412.0 337.0 L416.5 334.0 L415.5 300.0 L414.8 286.0 L410.3 230.0 L407.5 180.0 L404.5 166.0 Z" fill="none" stroke="#ffb020" stroke-width="5"/></g></g>
<path d="M347.5 342 V523" stroke="#000" stroke-width="2"/>
<g filter="url(#bl2)"><path d="M327.2 110 Q326.8 90.5 344.5 90.3 Q362.2 90.5 361.9 110 Q361.6 124 358.2 132.5 Q352 139 345.5 139 Q338.5 139 333.6 132.5 Q327.6 124 327.2 110 Z" fill="#ffffff"/>
<path d="M342.3 130 H352.8 L353.2 250 L354.5 262 L347.5 268 L340.5 262 L341.8 250 Z" fill="#ffffff"/>
<path d="M342.0 152 Q322.0 151 304.0 156 L301.5 166 Q318.0 168 342.0 169 Z" fill="#ffffff"/>
<ellipse cx="326.0" cy="163.5" rx="3.5" ry="1.8" fill="#fb9000"/><ellipse cx="335.5" cy="160" rx="2.2" ry="1.5" fill="#fb9000"/>
<path d="M322.0 160 Q314.0 175 315.5 205 Q317.0 232 322.0 246" stroke="#ffffff" stroke-width="2.6" fill="none"/>
<path d="M341.5 160.0 Q323.9 159.0 319.5 173.0" stroke="#ffffff" stroke-width="2.9" fill="none"/>
<path d="M319.0 166.0 Q328.0 174.0 338.0 179.0" stroke="#ffffff" stroke-width="1.7" fill="none"/>
<path d="M341.5 168.8 Q322.94 167.8 318.3 181.8" stroke="#ffffff" stroke-width="2.9" fill="none"/>
<path d="M319.0 174.8 Q328.0 182.8 338.0 187.8" stroke="#ffffff" stroke-width="1.7" fill="none"/>
<path d="M341.5 177.6 Q321.98 176.6 317.1 190.6" stroke="#ffffff" stroke-width="2.9" fill="none"/>
<path d="M319.0 183.6 Q328.0 191.6 338.0 196.6" stroke="#ffffff" stroke-width="1.7" fill="none"/>
<path d="M341.5 186.4 Q321.02 185.4 315.9 199.4" stroke="#ffffff" stroke-width="2.9" fill="none"/>
<path d="M319.0 192.4 Q328.0 200.4 338.0 205.4" stroke="#ffffff" stroke-width="1.7" fill="none"/>
<path d="M341.5 195.2 Q321.02 194.2 315.9 208.2" stroke="#ffffff" stroke-width="2.0" fill="none"/>
<path d="M319.0 201.2 Q328.0 209.2 338.0 214.2" stroke="#ffffff" stroke-width="1.2" fill="none"/>
<path d="M341.5 204.0 Q321.02 203.0 315.9 217.0" stroke="#e8c8a8" stroke-width="2.0" fill="none"/>
<path d="M319.0 210.0 Q328.0 218.0 338.0 223.0" stroke="#e8c8a8" stroke-width="1.2" fill="none"/>
<path d="M341.5 212.8 Q321.02 211.8 315.9 225.8" stroke="#e8c8a8" stroke-width="1.4" fill="none"/>
<path d="M319.0 218.8 Q328.0 226.8 338.0 231.8" stroke="#e8c8a8" stroke-width="0.8" fill="none"/>
<path d="M341.5 221.60000000000002 Q321.82 220.60000000000002 316.9 234.60000000000002" stroke="#e8c8a8" stroke-width="1.4" fill="none"/>
<path d="M341.5 230.4 Q322.62 229.4 317.9 243.4" stroke="#e8c8a8" stroke-width="1.4" fill="none"/>
<path d="M341.5 239.2 Q323.42 238.2 318.9 252.2" stroke="#e8c8a8" stroke-width="1.4" fill="none"/>
<path d="M302.5 163 L294.0 226" stroke="#ffffff" stroke-width="6.5" fill="none" stroke-linecap="round"/>
<path d="M293.5 226 L290.0 288" stroke="#ffffff" stroke-width="5.5" fill="none" stroke-linecap="round"/>
<path d="M283.0 287 L298.0 287 L300.5 300 L300.0 310 L282.0 310 L281.0 300 Z" fill="#ffffff"/>
<path d="M282.5 308 L280.5 333" stroke="#ffffff" stroke-width="3.2" stroke-linecap="round"/>
<path d="M286.5 308 L285.5 336.5" stroke="#ffffff" stroke-width="3.2" stroke-linecap="round"/>
<path d="M291.0 308 L291.0 337" stroke="#ffffff" stroke-width="3.2" stroke-linecap="round"/>
<path d="M295.5 308 L296.5 333.5" stroke="#ffffff" stroke-width="3.2" stroke-linecap="round"/>
<path d="M299.0 304 L302.0 322" stroke="#ffffff" stroke-width="3" stroke-linecap="round"/>
<path d="M284.5 317 L283.0 340" stroke="#000" stroke-width="1.1"/>
<path d="M288.75 317 L288.3 340" stroke="#000" stroke-width="1.1"/>
<path d="M293.25 317 L293.8 340" stroke="#000" stroke-width="1.1"/>
<path d="M318.0 256 L323.0 250 L332.0 251 L340.0 257 L342.5 266 L341.0 278 L336.5 286 L340.0 297 L332.0 300 L326.0 291 L321.0 278 L318.0 266 Z" fill="#ffffff"/>
<path d="M320.0 252 Q331.0 250 335.0 258 Q333.0 268 326.0 270 Q321.0 264 320.0 252 Z" fill="#fb9000"/>
<path d="M329.0 290 Q338.0 302 347.5 298" stroke="#ffffff" stroke-width="5" fill="none"/>
<path d="M313.0 288 L325.0 286 L331.0 291 L323.0 300 L315.0 305 Z" fill="#ffffff"/>
<path d="M318.0 294 L333.0 384" stroke="#ffffff" stroke-width="8.5" fill="none" stroke-linecap="round"/>
<path d="M327.5 378 Q335.0 372 342.5 378 Q346.0 388 345.0 396 L326.5 396 Q325.0 388 327.5 378 Z" fill="#ffffff"/>
<ellipse cx="333.0" cy="393.5" rx="2.5" ry="1.2" fill="#fb9000"/>
<path d="M327.5 397 L343.0 397 L344.5 489 L336.5 489 L333.5 440 Z" fill="#ffffff"/>
<path d="M329.5 404 L335.5 468" stroke="#fb9000" stroke-width="1.5"/>
<path d="M335.5 489 L346.5 489 L349.0 510 L347.0 520 L337.0 520 L334.5 505 Z" fill="#ffffff"/>
<path d="M353.0 152 Q373.0 151 391.0 156 L393.5 166 Q377.0 168 353.0 169 Z" fill="#ffffff"/>
<ellipse cx="369.0" cy="163.5" rx="3.5" ry="1.8" fill="#fb9000"/><ellipse cx="359.5" cy="160" rx="2.2" ry="1.5" fill="#fb9000"/>
<path d="M373.0 160 Q381.0 175 379.5 205 Q378.0 232 373.0 246" stroke="#ffffff" stroke-width="2.6" fill="none"/>
<path d="M353.5 160.0 Q371.1 159.0 375.5 173.0" stroke="#ffffff" stroke-width="2.9" fill="none"/>
<path d="M376.0 166.0 Q367.0 174.0 357.0 179.0" stroke="#ffffff" stroke-width="1.7" fill="none"/>
<path d="M353.5 168.8 Q372.06 167.8 376.7 181.8" stroke="#ffffff" stroke-width="2.9" fill="none"/>
<path d="M376.0 174.8 Q367.0 182.8 357.0 187.8" stroke="#ffffff" stroke-width="1.7" fill="none"/>
<path d="M353.5 177.6 Q373.02 176.6 377.9 190.6" stroke="#ffffff" stroke-width="2.9" fill="none"/>
<path d="M376.0 183.6 Q367.0 191.6 357.0 196.6" stroke="#ffffff" stroke-width="1.7" fill="none"/>
<path d="M353.5 186.4 Q373.98 185.4 379.1 199.4" stroke="#ffffff" stroke-width="2.9" fill="none"/>
<path d="M376.0 192.4 Q367.0 200.4 357.0 205.4" stroke="#ffffff" stroke-width="1.7" fill="none"/>
<path d="M353.5 195.2 Q373.98 194.2 379.1 208.2" stroke="#ffffff" stroke-width="2.0" fill="none"/>
<path d="M376.0 201.2 Q367.0 209.2 357.0 214.2" stroke="#ffffff" stroke-width="1.2" fill="none"/>
<path d="M353.5 204.0 Q373.98 203.0 379.1 217.0" stroke="#e8c8a8" stroke-width="2.0" fill="none"/>
<path d="M376.0 210.0 Q367.0 218.0 357.0 223.0" stroke="#e8c8a8" stroke-width="1.2" fill="none"/>
<path d="M353.5 212.8 Q373.98 211.8 379.1 225.8" stroke="#e8c8a8" stroke-width="1.4" fill="none"/>
<path d="M376.0 218.8 Q367.0 226.8 357.0 231.8" stroke="#e8c8a8" stroke-width="0.8" fill="none"/>
<path d="M353.5 221.60000000000002 Q373.18 220.60000000000002 378.1 234.60000000000002" stroke="#e8c8a8" stroke-width="1.4" fill="none"/>
<path d="M353.5 230.4 Q372.38 229.4 377.1 243.4" stroke="#e8c8a8" stroke-width="1.4" fill="none"/>
<path d="M353.5 239.2 Q371.58 238.2 376.1 252.2" stroke="#e8c8a8" stroke-width="1.4" fill="none"/>
<path d="M392.5 163 L401.0 226" stroke="#ffffff" stroke-width="6.5" fill="none" stroke-linecap="round"/>
<path d="M401.5 226 L405.0 288" stroke="#ffffff" stroke-width="5.5" fill="none" stroke-linecap="round"/>
<path d="M412.0 287 L397.0 287 L394.5 300 L395.0 310 L413.0 310 L414.0 300 Z" fill="#ffffff"/>
<path d="M412.5 308 L414.5 333" stroke="#ffffff" stroke-width="3.2" stroke-linecap="round"/>
<path d="M408.5 308 L409.5 336.5" stroke="#ffffff" stroke-width="3.2" stroke-linecap="round"/>
<path d="M404.0 308 L404.0 337" stroke="#ffffff" stroke-width="3.2" stroke-linecap="round"/>
<path d="M399.5 308 L398.5 333.5" stroke="#ffffff" stroke-width="3.2" stroke-linecap="round"/>
<path d="M396.0 304 L393.0 322" stroke="#ffffff" stroke-width="3" stroke-linecap="round"/>
<path d="M410.5 317 L412.0 340" stroke="#000" stroke-width="1.1"/>
<path d="M406.25 317 L406.7 340" stroke="#000" stroke-width="1.1"/>
<path d="M401.75 317 L401.2 340" stroke="#000" stroke-width="1.1"/>
<path d="M377.0 256 L372.0 250 L363.0 251 L355.0 257 L352.5 266 L354.0 278 L358.5 286 L355.0 297 L363.0 300 L369.0 291 L374.0 278 L377.0 266 Z" fill="#ffffff"/>
<path d="M375.0 252 Q364.0 250 360.0 258 Q362.0 268 369.0 270 Q374.0 264 375.0 252 Z" fill="#fb9000"/>
<path d="M366.0 290 Q357.0 302 347.5 298" stroke="#ffffff" stroke-width="5" fill="none"/>
<path d="M382.0 288 L370.0 286 L364.0 291 L372.0 300 L380.0 305 Z" fill="#ffffff"/>
<path d="M377.0 294 L362.0 384" stroke="#ffffff" stroke-width="8.5" fill="none" stroke-linecap="round"/>
<path d="M367.5 378 Q360.0 372 352.5 378 Q349.0 388 350.0 396 L368.5 396 Q370.0 388 367.5 378 Z" fill="#ffffff"/>
<ellipse cx="362.0" cy="393.5" rx="2.5" ry="1.2" fill="#fb9000"/>
<path d="M367.5 397 L352.0 397 L350.5 489 L358.5 489 L361.5 440 Z" fill="#ffffff"/>
<path d="M365.5 404 L359.5 468" stroke="#fb9000" stroke-width="1.5"/>
<path d="M359.5 489 L348.5 489 L346.0 510 L348.0 520 L358.0 520 L360.5 505 Z" fill="#ffffff"/></g></g>
<rect x="275.5" y="82.5" width="147.5" height="445" fill="none" stroke="#20c8c8" stroke-width="1"/>
<path d="M275.5 136.3 H423" stroke="#20c8c8" stroke-width="1"/>
<path d="M347.4 82.5 V250 M347.4 250 L349.5 527" stroke="#20c8c8" stroke-width="1"/>
<path d="M341.1 136.3 V250 M354.9 136.3 V250" stroke="#20c8c8" stroke-width="0.9"/>
<path d="M311.4 136.3 L309.5 250 L305.8 279 L316.7 527" stroke="#20c8c8" stroke-width="1" fill="none"/>
<path d="M380.8 136.3 L390.5 250 L393.3 283.7 L384.3 527" stroke="#20c8c8" stroke-width="1" fill="none"/>
<path d="M309.5 250 H390.5" stroke="#20c8c8" stroke-width="1"/>
<path d="M309.5 250 L348 343 L390.5 250" stroke="#20c8c8" stroke-width="1" fill="none"/>
<path d="M309 226.4 H389" stroke="#e040a0" stroke-width="0.9"/>
<path d="M309 283.75 H389" stroke="#e040a0" stroke-width="0.9"/>
<path d="M309 329 H389" stroke="#e040a0" stroke-width="0.9"/>
<text x="202.4" y="529.0" font-size="8.2" fill="#338c8c" textLength="69.5" lengthAdjust="spacingAndGlyphs">Image not for diagnosis</text>
<text x="446.0" y="529.0" font-size="8.2" fill="#338c8c" textLength="69.5" lengthAdjust="spacingAndGlyphs">Image not for diagnosis</text>
<text x="52.3" y="545.0" font-size="8.4" fill="#3399ff" textLength="61.4" lengthAdjust="spacingAndGlyphs">Standard Results</text>
<text x="52.3" y="553.3" font-size="8.2" fill="#151515" textLength="41.0" lengthAdjust="spacingAndGlyphs">Select region:</text>
<text x="52.3" y="561.3" font-size="8.2" fill="#151515" textLength="35.0" lengthAdjust="spacingAndGlyphs">Results tab:</text>
<text x="52.3" y="570.0" font-size="8.2" fill="#151515" textLength="31.7" lengthAdjust="spacingAndGlyphs">Image tab:</text>
<text x="31.2" y="570.0" font-size="8.2" fill="#151515" textLength="16.8" lengthAdjust="spacingAndGlyphs">14.10</text>

<g>
<!-- Measure -->
<path d="M16 34.8 H26 Q28 34.8 28 36.8 V37.6 Q28 38.6 26.5 38.6 H17 Q15.6 38.6 15.6 40 V40.5 H26 Q28 40.5 28 42.5 V44.3 Q28 46.4 26 46.4 H15.5 Q13.2 46.4 13.2 44.2 V37 Q13.2 34.8 16 34.8 Z" fill="#f4f4f8" stroke="#111" stroke-width="1.1"/>
<rect x="15.5" y="35.8" width="11" height="1.8" fill="#1a237e"/>
<rect x="15.2" y="41.4" width="11.6" height="1.8" fill="#1a237e"/>
<!-- Analyze -->
<rect x="48.2" y="35.1" width="13.6" height="3.6" fill="#2e9a2e"/>
<rect x="48.2" y="38.7" width="13.6" height="3.6" fill="#f2e21a"/>
<rect x="48.2" y="42.3" width="13.6" height="3.5" fill="#e01c1c"/>
<path d="M48.2 37.5 H54 L57 40.5 H61.8 M48.2 40.8 H53.5 L56.5 43.5 H61.8" stroke="#222" stroke-width="0.7" fill="none"/>
<rect x="48.2" y="45.6" width="14" height="0.8" fill="#888"/>
<!-- Directory -->
<g fill="#0a1680">
<circle cx="89" cy="35.6" r="1.6"/><path d="M87.3 37.5 H90.7 V42 L90 42 V47 H88 V42 L87.3 42 Z"/>
<circle cx="94.5" cy="35.6" r="1.6"/><path d="M92.8 37.5 H96.2 V42 L95.5 42 V47 H93.5 V42 L92.8 42 Z"/>
</g>
<!-- QA -->
<rect x="119.6" y="34.5" width="13.2" height="13" rx="1.5" fill="#e4ecfa" stroke="#9ab0d8" stroke-width="0.9"/>
<path d="M123 41.5 L125 44.5 L129.5 37.5" stroke="#2aa52a" stroke-width="1.3" fill="none"/>
<!-- Imaging -->
<circle cx="167.3" cy="39.7" r="4.3" fill="#dfe8f2" stroke="#2a3a5a" stroke-width="1"/>
<path d="M167.3 35.4 A4.3 4.3 0 0 1 167.3 44 Z" fill="#1c2a44"/>
<path d="M170.5 43 L176.5 47.5" stroke="#3a68b8" stroke-width="1.8" stroke-linecap="round"/>
<!-- ROIs -->
<rect x="197.3" y="35.2" width="14" height="10.2" fill="#c0d4f2" stroke="#3a50b0" stroke-width="1"/>
<path d="M207 38 V45 M203.5 41.5 H210.5 M204.5 39.3 H209.5 M204.5 43.7 H209.5" stroke="#223" stroke-width="0.7"/>
<!-- Points -->
<path d="M239 42 L247 34" stroke="#8aa0c8" stroke-width="1.6" stroke-linecap="round"/>
<path d="M233 46 L236.5 49 L240.5 44 L237.5 41 Z" fill="#111"/>
<!-- Copy -->
<rect x="267.5" y="34.5" width="5.5" height="12.8" fill="#e8e4d0" stroke="#333" stroke-width="0.9"/>
<rect x="276.5" y="34.5" width="5.5" height="12.8" fill="#e8e4d0" stroke="#333" stroke-width="0.9"/>
<path d="M281 39.5 H274 M276.5 36.8 L273.5 39.5 L276.5 42.2" stroke="#2a9ad8" stroke-width="1.8" fill="none"/>
<!-- Finish -->
<path d="M308 47.5 L313 34" stroke="#444" stroke-width="0.9"/>
<path d="M313 34 L323.5 37 L319.5 47 L310.5 44 Z" fill="#fff" stroke="#333" stroke-width="0.6"/>
<path d="M314 36 h2 v2 h-2z M318 37 h2 v2 h-2z M316 38 h2 v2 h-2z M320 39 h2 v2h-2z M314 40 h2 v2 h-2z M318 41 h2 v2 h-2z M316 42 h2 v2 h-2z M312 42 h2 v2h-2z M320 43 h-2 v2 h2z" fill="#111"/>
<path d="M336 45 H340.4 L338.2 47.4 Z" fill="#111"/>
<!-- Reports -->
<path d="M356 34 H364 L365 39 H355 Z" fill="#d8ecf8" stroke="#8ab" stroke-width="0.6"/>
<rect x="353.3" y="39" width="15" height="6.5" rx="1.5" fill="#cfcfcf" stroke="#777" stroke-width="0.8"/>
<rect x="355" y="45" width="11.5" height="2.8" fill="#aaa" stroke="#666" stroke-width="0.5"/>
<path d="M381 45 H385.4 L383.2 47.4 Z" fill="#111"/>
<!-- Save -->
<rect x="398.5" y="34.8" width="12.7" height="12" rx="1" fill="#8a8a8a"/>
<rect x="401" y="35.6" width="7.5" height="4" fill="#e8e8e8"/>
<rect x="401" y="42.5" width="7.5" height="4" fill="#d0d0d0"/>
<!-- Close -->
<path d="M433 37 H438 L439.5 35.5 H446.5 V47.5 H433 Z" fill="#e8c850" stroke="#b08a20" stroke-width="0.7"/>
<path d="M433.5 39 H447 L446 47.5 H433.5 Z" fill="#f8e070"/>
<path d="M438 40 L441.5 43.5 M438 40 V42.5 M438 40 H440.5" stroke="#1a2a80" stroke-width="1.2" fill="none"/>
</g>


<rect x="26.5" y="65" width="0.9" height="471" fill="#b8b8b8"/>
<rect x="3.1" y="69.3" width="20" height="20" fill="#f6f6f6" stroke="#dcdcdc" stroke-width="0.8"/>
<path d="M9.2 72.5 V83 L11.6 80.8 L14 85.2 L15.6 84.4 L13.4 80 L16.8 80 Z" fill="#fff" stroke="#333" stroke-width="0.8"/>
<circle cx="9.8" cy="96.6" r="3.8" fill="#cfe6f8" stroke="#2a68b8" stroke-width="1.1"/>
<path d="M8 96.6 H11.6 M9.8 94.8 V98.4" stroke="#112" stroke-width="0.6"/>
<path d="M12.7 99.5 L18.8 105" stroke="#2a68b8" stroke-width="1.8" stroke-linecap="round"/>
<path d="M7.5 118 Q6.5 116 8 115.5 L9.5 117 V113.5 Q10.5 112.5 11.5 113.5 V112.8 Q12.5 112 13.5 113 V113.5 Q14.5 112.8 15.5 113.8 V115 Q16.5 114.5 17.2 115.5 V120 Q16.5 124 13 124.5 H11.5 Q9.5 124 7.5 118 Z" fill="#fff" stroke="#333" stroke-width="0.8"/>
<rect x="0" y="132.8" width="26.5" height="0.8" fill="#d0d0d0"/>
<rect x="8.3" y="158.5" width="1" height="61.5" fill="#a8a8a8"/>
<rect x="9.3" y="158.5" width="0.6" height="61.5" fill="#fff"/>
<path d="M3.8 217.2 H15 L17.2 219.5 L15 223.3 H3.8 Z" fill="#f4f4f4" stroke="#999" stroke-width="0.7"/>
<rect x="0" y="229.5" width="26.5" height="0.8" fill="#d0d0d0"/>
<rect x="4.7" y="237" width="16.5" height="16" fill="#000"/>
<rect x="3" y="255.6" width="19.5" height="19.4" fill="#f8f8f8" stroke="#c8c8c8" stroke-width="0.7"/>
<rect x="4.7" y="258" width="16.5" height="15.5" fill="#000"/>
<rect x="4.7" y="277.5" width="16.5" height="16.2" fill="#000"/>
<circle cx="13" cy="240.2" r="1.5" fill="#dddddd"/><path d="M10.8 242 H15.2 L16.2 247 L15 247.5 L14.8 252.5 H11.2 L11 247.5 L9.8 247 Z" fill="#6a6a6a"/><rect x="12.4" y="242.5" width="1.2" height="9" fill="#c8c8c8"/>
<circle cx="13" cy="260.7" r="1.5" fill="#ffffff"/><path d="M10.8 262.5 H15.2 L16.2 267.5 L15 268.0 L14.8 273.0 H11.2 L11 268.0 L9.8 267.5 Z" fill="#e88a10"/><rect x="12.4" y="263.0" width="1.2" height="9" fill="#fff0c0"/>
<circle cx="13" cy="280.7" r="1.5" fill="#30c030"/><path d="M10.8 282.5 H15.2 L16.2 287.5 L15 288.0 L14.8 293.0 H11.2 L11 288.0 L9.8 287.5 Z" fill="#18a018"/><rect x="12.4" y="283.0" width="1.2" height="9" fill="#80f040"/>
<defs><linearGradient id="gbar" x1="0" x2="1"><stop offset="0" stop-color="#e05020"/><stop offset="0.5" stop-color="#f8a020"/><stop offset="1" stop-color="#f8f040"/></linearGradient></defs>
<rect x="4.7" y="303" width="16.5" height="5.7" rx="1" fill="url(#gbar)" stroke="#999" stroke-width="0.7"/>
<rect x="0" y="320" width="26.5" height="0.8" fill="#d0d0d0"/>

<text x="1.7" y="143.3" font-size="8" fill="#333" textLength="16.5" lengthAdjust="spacingAndGlyphs">Zoom</text>
<text x="1.7" y="154.2" font-size="8" fill="#333" textLength="14.8" lengthAdjust="spacingAndGlyphs">85%</text>
<rect x="32.1" y="67" width="52.6" height="12.5" fill="#f6f6f6"/><rect x="84.2" y="67" width="1" height="12.5" fill="#999"/>
<rect x="32.6" y="69.3" width="9.9" height="9.7" fill="#111"/><circle cx="37.5" cy="71.6" r="1.2" fill="#ddd"/><path d="M36 73.3 H39 L39.5 77.5 H35.5 Z" fill="#bbb"/>
<text x="46.0" y="76.6" font-size="8.4" fill="#222" textLength="31.8" lengthAdjust="spacingAndGlyphs">Total Body</text>
<rect x="0" y="574.5" width="1024" height="1.5" fill="#555"/>
<path d="M981.5 575 V567 Q981.5 563 985.5 563 H1024 V575 Z" fill="#cfcfcf" stroke="#444" stroke-width="0.9"/>
<defs><radialGradient id="gbulb" cx="0.4" cy="0.35" r="0.6"><stop offset="0" stop-color="#f8ff90"/><stop offset="0.6" stop-color="#e0f020"/><stop offset="1" stop-color="#a8c000"/></radialGradient></defs>
<circle cx="39.3" cy="548.5" r="5.6" fill="url(#gbulb)"/><rect x="37" y="554.5" width="4.6" height="5.5" rx="1" fill="#888"/>
<text x="146.1" y="553.4" font-size="8.2" fill="#151515" textLength="49.2" lengthAdjust="spacingAndGlyphs">up/down arrows</text>
<text x="146.1" y="561.5" font-size="8.2" fill="#151515" textLength="47.0" lengthAdjust="spacingAndGlyphs">left/right arrows</text>
<text x="146.1" y="569.8" font-size="8.2" fill="#151515" textLength="38.3" lengthAdjust="spacingAndGlyphs">tab/shift+tab</text>
</svg>
</body></html>
